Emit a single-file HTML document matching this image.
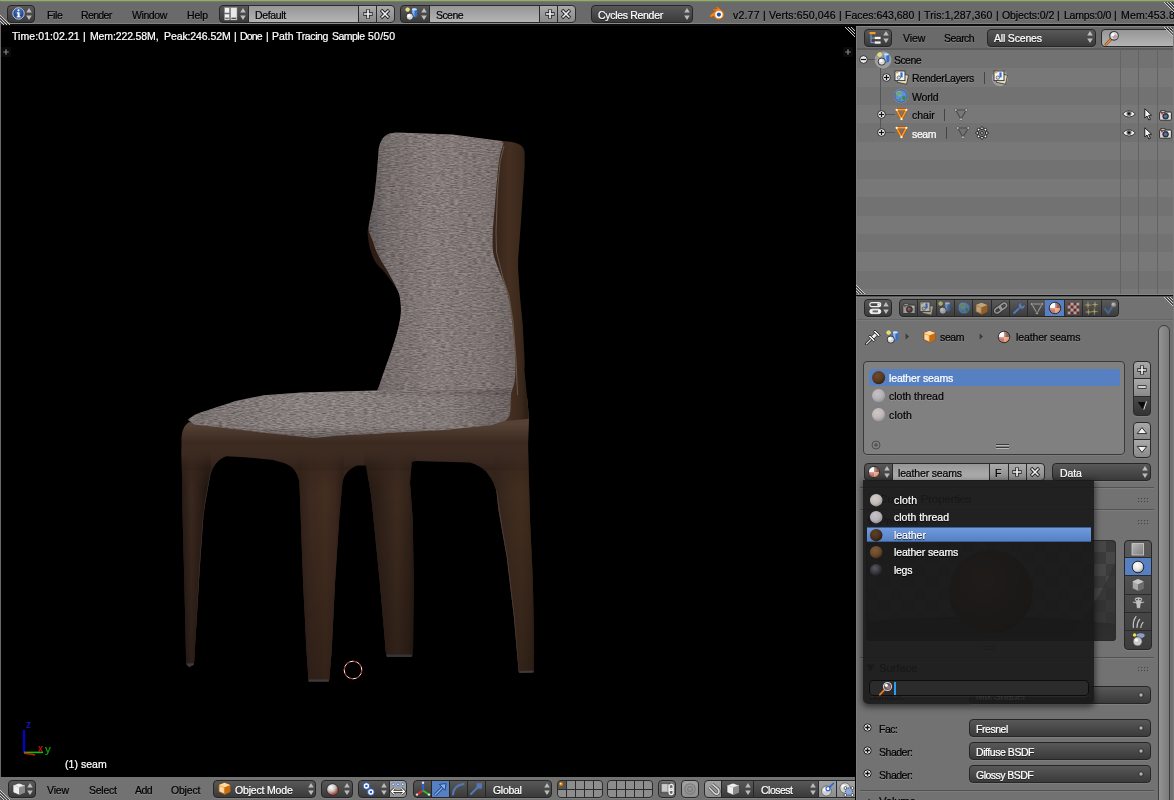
<!DOCTYPE html>
<html lang="en"><head><meta charset="utf-8"><title>Blender</title>
<style>
html,body{margin:0;padding:0;background:#000;overflow:hidden}
#root{position:relative;width:1174px;height:800px;overflow:hidden;background:#000;font-family:"Liberation Sans","DejaVu Sans",sans-serif;font-size:10.5px}
.b{position:absolute;box-sizing:border-box;display:block}
.t{-webkit-text-stroke:.22px;position:absolute;white-space:nowrap;line-height:12px;height:12px;will-change:transform}
.hdr{background:#727272}
.wm{border:1px solid #262626;background:linear-gradient(#585858,#3a3a3a);box-shadow:0 1px 0 rgba(255,255,255,.09)}
.wt{border:1px solid #2b2b2b;background:linear-gradient(#969696,#b4b4b4);box-shadow:0 1px 0 rgba(255,255,255,.09)}
.wb{border:1px solid #2b2b2b;background:linear-gradient(#a9a9a9,#8a8a8a);box-shadow:0 1px 0 rgba(255,255,255,.09)}
.sel{background:linear-gradient(#5680c2,#5680c2)}

</style></head>
<body>
<div id="root">
<div class="b" style="left:0px;top:0px;width:1174px;height:1.15px;background:#8cb450"></div>
<div class="b" style="left:0px;top:1.15px;width:1174px;height:1px;background:#77777c"></div>
<div class="b" style="left:0px;top:2px;width:1174px;height:21.2px;background:#6a6a6a"></div>
<div class="b" style="left:0px;top:23.2px;width:1174px;height:1px;background:#808080"></div>
<div class="b" style="left:0px;top:24.2px;width:1174px;height:1.9px;background:#0c0c0c"></div>
<div class="b" style="left:0px;top:1px;width:1px;height:799px;background:#6a6a6a"></div>
<svg class="b" style="left:0px;top:13px;" width="12" height="12" viewBox="0 0 12 12"><path d="M0 2 L10 12 M0 5 L7 12 M0 8 L4 12" stroke="#cfcfcf" stroke-width="1" fill="none"/><path d="M0 3.4 L8.6 12 M0 6.4 L5.6 12 M0 9.4 L2.6 12" stroke="#333" stroke-width="1" fill="none"/></svg>
<div class="b wm" style="left:7px;top:4.5px;width:28px;height:18.4px;border-radius:4px"></div>
<svg class="b" style="left:12px;top:7px;" width="13" height="13" viewBox="0 0 13 13"><circle cx="6.5" cy="6.5" r="5.7" fill="#234c98" stroke="#d4dcec" stroke-width=".9"/><circle cx="6.5" cy="4.6" r="3.8" fill="#5b86c9" opacity=".4"/><rect x="5.6" y="5.4" width="2" height="4.6" fill="#fff"/><rect x="4.8" y="5.4" width="2" height="1" fill="#fff"/><rect x="4.6" y="9.4" width="4" height="1" fill="#fff"/><circle cx="6.5" cy="3.3" r="1.1" fill="#fff"/></svg>
<svg class="b" style="left:24.2px;top:6.6px" width="10" height="14" viewBox="-5 -7 10 14"><path d="M0 -6 L2.8 -1.5 L-2.8 -1.5Z M0 6 L2.8 1.5 L-2.8 1.5Z" fill="#bcbcbc"/></svg>
<span class="t" style="left:46.5px;top:8.86px;color:#000;font-size:10.5px;letter-spacing:-0.369px;text-shadow:0 1px 0 rgba(255,255,255,.17);">File</span>
<span class="t" style="left:81.4px;top:8.86px;color:#000;font-size:10.5px;letter-spacing:-0.631px;text-shadow:0 1px 0 rgba(255,255,255,.17);">Render</span>
<span class="t" style="left:131.6px;top:8.86px;color:#000;font-size:10.5px;letter-spacing:-0.409px;text-shadow:0 1px 0 rgba(255,255,255,.17);">Window</span>
<span class="t" style="left:186.5px;top:8.86px;color:#000;font-size:10.5px;letter-spacing:-0.198px;text-shadow:0 1px 0 rgba(255,255,255,.17);">Help</span>
<div class="b wm" style="left:219px;top:4.5px;width:30px;height:18.4px;border-radius:4px 0 0 4px"></div>
<svg class="b" style="left:224px;top:7px;" width="14" height="14" viewBox="0 0 14 14"><rect x=".5" y=".5" width="5" height="5.5" fill="#f4f4f4" stroke="#888" stroke-width=".6"/><rect x=".5" y="7" width="5" height="6" fill="#f4f4f4" stroke="#888" stroke-width=".6"/><rect x="6.6" y=".5" width="6.4" height="12.5" fill="#e8e8e8" stroke="#888" stroke-width=".6"/><rect x="7.4" y="10.6" width="4.8" height="1.4" fill="#555"/><rect x="1.2" y="10.6" width="3.6" height="1.2" fill="#555"/></svg>
<svg class="b" style="left:237.7px;top:6.6px" width="10" height="14" viewBox="-5 -7 10 14"><path d="M0 -6 L2.8 -1.5 L-2.8 -1.5Z M0 6 L2.8 1.5 L-2.8 1.5Z" fill="#bcbcbc"/></svg>
<div class="b wt" style="left:248px;top:4.5px;width:111px;height:18.4px;"></div>
<span class="t" style="left:255.3px;top:8.86px;color:#000;font-size:10.5px;letter-spacing:-0.347px;text-shadow:0 1px 0 rgba(255,255,255,.17);">Default</span>
<div class="b wb" style="left:358px;top:4.5px;width:19px;height:18.4px;"></div>
<div class="b wb" style="left:376px;top:4.5px;width:19px;height:18.4px;border-radius:0 4px 4px 0"></div>
<svg class="b" style="left:362.4px;top:7.800000000000001px;" width="12" height="12" viewBox="0 0 12 12"><path d="M6 1.2V10.8M1.2 6H10.8" stroke="#1e1e1e" stroke-width="3.4" fill="none"/><path d="M6 1.8V10.2M1.8 6H10.2" stroke="#f2f2f2" stroke-width="1.7" fill="none"/></svg>
<svg class="b" style="left:379.2px;top:7.800000000000001px;" width="12" height="12" viewBox="0 0 12 12"><path d="M2 2L10 10M10 2L2 10" stroke="#1e1e1e" stroke-width="3.2" fill="none"/><path d="M2.5 2.5L9.5 9.5M9.5 2.5L2.5 9.5" stroke="#f2f2f2" stroke-width="1.6" fill="none"/></svg>
<div class="b wm" style="left:400px;top:4.5px;width:30px;height:18.4px;border-radius:4px 0 0 4px"></div>
<svg class="b" style="left:405px;top:6.5px;" width="14.0" height="14.0" viewBox="0 0 14 14"><circle cx="2.6" cy="2.6" r="1.9" fill="#e6e04a" stroke="#fffbd0" stroke-width=".5"/><rect x="6.6" y="1.2" width="5.6" height="9.4" rx="2.4" fill="#2f6fd2"/><rect x="7.2" y="1.6" width="2.2" height="8.4" rx="1.1" fill="#8fb6ee"/><ellipse cx="9.4" cy="2.4" rx="2.5" ry="1.1" fill="#cfe0f8"/><circle cx="4.8" cy="9.6" r="3.6" fill="#d8d8d8" stroke="#2a2a2a" stroke-width=".9"/><circle cx="3.9" cy="8.6" r="1.6" fill="#fff"/></svg>
<svg class="b" style="left:418.5px;top:6.6px" width="10" height="14" viewBox="-5 -7 10 14"><path d="M0 -6 L2.8 -1.5 L-2.8 -1.5Z M0 6 L2.8 1.5 L-2.8 1.5Z" fill="#bcbcbc"/></svg>
<div class="b wt" style="left:429px;top:4.5px;width:111px;height:18.4px;"></div>
<span class="t" style="left:435.7px;top:8.86px;color:#000;font-size:10.5px;letter-spacing:-0.570px;text-shadow:0 1px 0 rgba(255,255,255,.17);">Scene</span>
<div class="b wb" style="left:539px;top:4.5px;width:19px;height:18.4px;"></div>
<div class="b wb" style="left:557px;top:4.5px;width:19px;height:18.4px;border-radius:0 4px 4px 0"></div>
<svg class="b" style="left:543.5px;top:7.800000000000001px;" width="12" height="12" viewBox="0 0 12 12"><path d="M6 1.2V10.8M1.2 6H10.8" stroke="#1e1e1e" stroke-width="3.4" fill="none"/><path d="M6 1.8V10.2M1.8 6H10.2" stroke="#f2f2f2" stroke-width="1.7" fill="none"/></svg>
<svg class="b" style="left:560.2px;top:7.800000000000001px;" width="12" height="12" viewBox="0 0 12 12"><path d="M2 2L10 10M10 2L2 10" stroke="#1e1e1e" stroke-width="3.2" fill="none"/><path d="M2.5 2.5L9.5 9.5M9.5 2.5L2.5 9.5" stroke="#f2f2f2" stroke-width="1.6" fill="none"/></svg>
<div class="b wm" style="left:591px;top:4.5px;width:102px;height:18.4px;border-radius:4px"></div>
<span class="t" style="left:598.2px;top:8.86px;color:#fff;font-size:10.5px;letter-spacing:-0.306px;text-shadow:0 1px 0 rgba(0,0,0,.5);">Cycles Render</span>
<svg class="b" style="left:681.5px;top:6.6px" width="10" height="14" viewBox="-5 -7 10 14"><path d="M0 -6 L2.8 -1.5 L-2.8 -1.5Z M0 6 L2.8 1.5 L-2.8 1.5Z" fill="#bcbcbc"/></svg>
<svg class="b" style="left:708px;top:5.5px;" width="17" height="15" viewBox="0 0 17 15"><path d="M2 9.2 L8.2 4.4 L5.6 4.4 Q4.6 3.4 5.8 2.9 L9.6 2.9 L8.2 1.6 Q8.4 .4 9.6 .9 L15 5.6 Q17 8.6 15 11.6 Q12 14.4 8.4 13 Q6.2 12 5.8 9.8 L3.4 11.2 Q1.4 10.8 2 9.2Z" fill="#f5871f" stroke="#b55a08" stroke-width=".5"/><circle cx="10.9" cy="8.6" r="3.7" fill="#fff"/><circle cx="10.9" cy="8.6" r="2.1" fill="#1e4fa8"/></svg>
<span class="t" style="left:733.0px;top:8.86px;color:#000;font-size:10.5px;letter-spacing:0.199px;text-shadow:0 1px 0 rgba(255,255,255,.17);">v2.77</span>
<span class="t" style="left:762.9px;top:8.86px;color:#000;font-size:10.5px;text-shadow:0 1px 0 rgba(255,255,255,.17);">|</span>
<span class="t" style="left:769.1px;top:8.86px;color:#000;font-size:10.5px;letter-spacing:0.155px;text-shadow:0 1px 0 rgba(255,255,255,.17);">Verts:650,046</span>
<span class="t" style="left:839.2px;top:8.86px;color:#000;font-size:10.5px;text-shadow:0 1px 0 rgba(255,255,255,.17);">|</span>
<span class="t" style="left:845.4px;top:8.86px;color:#000;font-size:10.5px;letter-spacing:-0.017px;text-shadow:0 1px 0 rgba(255,255,255,.17);">Faces:643,680</span>
<span class="t" style="left:918.1px;top:8.86px;color:#000;font-size:10.5px;text-shadow:0 1px 0 rgba(255,255,255,.17);">|</span>
<span class="t" style="left:924.3px;top:8.86px;color:#000;font-size:10.5px;letter-spacing:0.126px;text-shadow:0 1px 0 rgba(255,255,255,.17);">Tris:1,287,360</span>
<span class="t" style="left:995.9px;top:8.86px;color:#000;font-size:10.5px;text-shadow:0 1px 0 rgba(255,255,255,.17);">|</span>
<span class="t" style="left:1001.7px;top:8.86px;color:#000;font-size:10.5px;letter-spacing:-0.084px;text-shadow:0 1px 0 rgba(255,255,255,.17);">Objects:0/2</span>
<span class="t" style="left:1057.4px;top:8.86px;color:#000;font-size:10.5px;text-shadow:0 1px 0 rgba(255,255,255,.17);">|</span>
<span class="t" style="left:1063.6px;top:8.86px;color:#000;font-size:10.5px;letter-spacing:-0.220px;text-shadow:0 1px 0 rgba(255,255,255,.17);">Lamps:0/0</span>
<span class="t" style="left:1113.9px;top:8.86px;color:#000;font-size:10.5px;text-shadow:0 1px 0 rgba(255,255,255,.17);">|</span>
<span class="t" style="left:1120.5px;top:8.86px;color:#000;font-size:10.5px;letter-spacing:0.155px;text-shadow:0 1px 0 rgba(255,255,255,.17);">Mem:453.8</span>
<svg class="b" style="left:1162px;top:2px;" width="12" height="12" viewBox="0 0 12 12"><path d="M2 0 L12 10 M5 0 L12 7 M8 0 L12 4" stroke="#cfcfcf" stroke-width="1" fill="none"/><path d="M3.4 0 L12 8.6 M6.4 0 L12 5.6 M9.4 0 L12 2.6" stroke="#2a2a2a" stroke-width="1" fill="none"/></svg>
<svg class="b" style="left:0;top:26px" width="855" height="751" viewBox="0 26 855 751"><defs><linearGradient id="lx" gradientUnits="userSpaceOnUse" x1="181" y1="0" x2="534" y2="0"><stop offset="0.0" stop-color="#271b15"/><stop offset="0.0255" stop-color="#3e2b20"/><stop offset="0.0453" stop-color="#33231a"/><stop offset="0.068" stop-color="#221712"/><stop offset="0.1388" stop-color="#33231b"/><stop offset="0.3088" stop-color="#3e2b20"/><stop offset="0.3399" stop-color="#3c291e"/><stop offset="0.3881" stop-color="#4d3424"/><stop offset="0.4278" stop-color="#412a1d"/><stop offset="0.4561" stop-color="#332118"/><stop offset="0.5411" stop-color="#291c15"/><stop offset="0.5977" stop-color="#3b291c"/><stop offset="0.6346" stop-color="#3f2b1e"/><stop offset="0.6601" stop-color="#2e2017"/><stop offset="0.7337" stop-color="#3e2b20"/><stop offset="0.847" stop-color="#3c291e"/><stop offset="0.9037" stop-color="#35241b"/><stop offset="0.9377" stop-color="#3f2b20"/><stop offset="0.9717" stop-color="#493123"/><stop offset="1.0" stop-color="#3e2a1d"/></linearGradient><linearGradient id="bk" gradientUnits="userSpaceOnUse" x1="368" y1="0" x2="515" y2="0"><stop offset="0" stop-color="#6a6263"/><stop offset="0.12" stop-color="#867d7c"/><stop offset="0.45" stop-color="#988e8c"/><stop offset="0.8" stop-color="#908684"/><stop offset="1" stop-color="#7e7573"/></linearGradient><linearGradient id="st" gradientUnits="userSpaceOnUse" x1="188" y1="0" x2="512" y2="0"><stop offset="0" stop-color="#8a8281"/><stop offset="0.35" stop-color="#9c9391"/><stop offset="0.8" stop-color="#968d8b"/><stop offset="1" stop-color="#7a7170"/></linearGradient><linearGradient id="stv" gradientUnits="userSpaceOnUse" x1="0" y1="391" x2="0" y2="438"><stop offset="0" stop-color="rgba(0,0,0,0)"/><stop offset="0.75" stop-color="rgba(0,0,0,0)"/><stop offset="1" stop-color="rgba(0,0,0,.28)"/></linearGradient><linearGradient id="frv" gradientUnits="userSpaceOnUse" x1="0" y1="424" x2="0" y2="470"><stop offset="0" stop-color="rgba(255,220,190,.16)"/><stop offset="0.4" stop-color="rgba(255,220,190,.03)"/><stop offset="1" stop-color="rgba(0,0,0,.12)"/></linearGradient><linearGradient id="sd" gradientUnits="userSpaceOnUse" x1="496" y1="0" x2="526" y2="0"><stop offset="0" stop-color="#37251b"/><stop offset="0.45" stop-color="#442f21"/><stop offset="0.8" stop-color="#3c291c"/><stop offset="1" stop-color="#2e2017"/></linearGradient><linearGradient id="jn" gradientUnits="userSpaceOnUse" x1="0" y1="388" x2="0" y2="398"><stop offset="0" stop-color="rgba(0,0,0,.0)"/><stop offset="0.5" stop-color="rgba(0,0,0,.10)"/><stop offset="1" stop-color="rgba(0,0,0,0)"/></linearGradient><filter id="nz" x="0" y="0" width="100%" height="100%"><feTurbulence type="fractalNoise" baseFrequency="0.22 0.95" numOctaves="2" seed="7" result="n"/><feColorMatrix in="n" type="matrix" values="0 0 0 0 0  0 0 0 0 0  0 0 0 0 0  1.1 1.1 0 0 -0.78"/><feComposite in2="SourceGraphic" operator="in"/></filter><linearGradient id="lgv" gradientUnits="userSpaceOnUse" x1="0" y1="470" x2="0" y2="685"><stop offset="0" stop-color="rgba(0,0,0,0)"/><stop offset="1" stop-color="rgba(0,0,0,.28)"/></linearGradient><linearGradient id="mvg" gradientUnits="userSpaceOnUse" x1="0" y1="400" x2="0" y2="700"><stop offset="0" stop-color="#000"/><stop offset="0.17" stop-color="#000"/><stop offset="0.3" stop-color="#fff"/><stop offset="1" stop-color="#fff"/></linearGradient><linearGradient id="l1" gradientUnits="userSpaceOnUse" x1="181" y1="0" x2="207" y2="0"><stop offset="0" stop-color="#251a14"/><stop offset="0.4" stop-color="#3b2920"/><stop offset="0.75" stop-color="#2d1f17"/><stop offset="1" stop-color="#201511"/></linearGradient><linearGradient id="l2" gradientUnits="userSpaceOnUse" x1="299" y1="0" x2="342" y2="0"><stop offset="0" stop-color="#302117"/><stop offset="0.25" stop-color="#3e2a20"/><stop offset="0.62" stop-color="#462f21"/><stop offset="0.85" stop-color="#3e2920"/><stop offset="1" stop-color="#2d1e16"/></linearGradient><linearGradient id="l3" gradientUnits="userSpaceOnUse" x1="366" y1="0" x2="414" y2="0"><stop offset="0" stop-color="#231913"/><stop offset="0.35" stop-color="#33231a"/><stop offset="0.65" stop-color="#3f2c20"/><stop offset="0.9" stop-color="#332319"/><stop offset="1" stop-color="#271b15"/></linearGradient><linearGradient id="l4" gradientUnits="userSpaceOnUse" x1="496" y1="0" x2="535" y2="0"><stop offset="0" stop-color="#33241c"/><stop offset="0.3" stop-color="#3e2b1f"/><stop offset="0.65" stop-color="#442f21"/><stop offset="0.9" stop-color="#3c291c"/><stop offset="1" stop-color="#332218"/></linearGradient></defs><path d="M181.3 454.4L181.5 440C181.5 431 184 425.5 189 422L312.5 436L512 405L527.2 398L529 418.8L528.1 445L529 482.5L530 520L532.9 581.3L534.1 652.6L533.7 671.6L533.4 672.4L519.2 673L518.7 671.6L513.9 616.9L506.8 557.5L498.5 510L496.3 490C492 478 486 467 470 462.6L415.6 461L411.9 461.9L410 482.5L412.8 520L413.7 581.3L413 652.6L411.8 657L386.8 656.3L386.1 654.9L379.7 581.3L372.6 510L370.6 491.9L365.9 465.6L357.5 465.6C350 468 344 474 342.5 482.5L341.6 491.9L339.5 515L335.1 581.3L331.6 652.6L329.2 679.9L328.7 681.4L308.5 681.4L308.5 679.9L306.6 652.6L303 581.3L300.5 512L299.4 482.5C298 472 292 465.5 284 463L273.1 460L245 457.2L226.3 456.3C218 459 213 466 210.3 475L205.6 501.3L203.5 515L199.7 569.4L196.1 628.8L194.2 662L193.8 664.6L189 667L186.2 664.6L184.3 581.3L182.4 510L182.2 482.5Z" fill="#35241b"/><clipPath id="cf"><path d="M181.3 454.4L181.5 440C181.5 431 184 425.5 189 422L312.5 436L512 405L527.2 398L529 418.8L528.1 445L529 482.5L530 520L532.9 581.3L534.1 652.6L533.7 671.6L533.4 672.4L519.2 673L518.7 671.6L513.9 616.9L506.8 557.5L498.5 510L496.3 490C492 478 486 467 470 462.6L415.6 461L411.9 461.9L410 482.5L412.8 520L413.7 581.3L413 652.6L411.8 657L386.8 656.3L386.1 654.9L379.7 581.3L372.6 510L370.6 491.9L365.9 465.6L357.5 465.6C350 468 344 474 342.5 482.5L341.6 491.9L339.5 515L335.1 581.3L331.6 652.6L329.2 679.9L328.7 681.4L308.5 681.4L308.5 679.9L306.6 652.6L303 581.3L300.5 512L299.4 482.5C298 472 292 465.5 284 463L273.1 460L245 457.2L226.3 456.3C218 459 213 466 210.3 475L205.6 501.3L203.5 515L199.7 569.4L196.1 628.8L194.2 662L193.8 664.6L189 667L186.2 664.6L184.3 581.3L182.4 510L182.2 482.5Z"/></clipPath><mask id="mv" maskUnits="userSpaceOnUse" x="170" y="400" width="380" height="300"><rect x="170" y="400" width="380" height="300" fill="url(#mvg)"/></mask><g clip-path="url(#cf)"><rect x="181" y="398" width="354" height="72" fill="url(#frv)"/><g mask="url(#mv)"><rect x="181" y="430" width="30" height="240" fill="url(#l1)"/><rect x="298" y="430" width="46" height="255" fill="url(#l2)"/><rect x="364" y="430" width="52" height="230" fill="url(#l3)"/><rect x="494" y="430" width="42" height="245" fill="url(#l4)"/></g><rect x="181" y="470" width="354" height="215" fill="url(#lgv)"/><path d="M477 465L489 475L497 491L500 512L508 560L515 620L519 672L516 672L510 615L503 557L495 510L491 492L484 478L474 468Z" fill="#564941" opacity=".7"/><path d="M226 456.5C217 459.5 212 467 209.5 476L204.8 502L202.5 520L199 570L196 628L197.5 628L200.5 570L204.5 520L207 502L212 478C215 469 220 462 230 459.5Z" fill="#594c43" opacity=".5"/></g><path d="M420 225L378.4 153C378.1 156.8 377.4 167.8 376.6 175.6C375.8 183.4 374.9 192.8 373.8 200.0C372.7 207.2 371.0 214.0 370.0 218.8C369.0 223.6 368.4 226.5 368.0 229.0C367.6 231.5 367.5 231.3 367.7 234.0C367.9 236.7 368.5 241.8 369.1 245.0C369.7 248.2 370.6 250.5 371.5 253.0C372.4 255.5 373.1 257.9 374.2 260.0C375.3 262.1 376.5 263.7 378.0 265.5C379.5 267.3 381.3 268.5 383.1 270.6C384.9 272.7 387.1 275.5 389.0 278.0C390.9 280.5 392.8 283.2 394.4 285.6C396.0 288.0 397.4 290.2 398.4 292.5C399.4 294.8 400.0 296.3 400.4 299.5C400.8 302.7 401.3 307.0 400.9 311.9C400.5 316.8 399.5 322.9 398.1 328.8C396.7 334.7 394.5 341.2 392.5 347.5C390.5 353.8 388.1 360.1 385.9 366.3C383.7 372.6 381.0 380.7 379.4 385.0C377.8 389.3 376.8 390.8 376.3 392.0L420 392Z" fill="#2d1d15"/><path d="M494 140L512 142C520 143.5 524.7 147 524.7 153.1L524.7 166.3L522.8 194.4L520.9 222.5L518.1 260L518.1 268.8L520 296.9L522.8 325L524.7 362.5L524.4 370L527.2 398.1L529 418.8L505 421L488 380L485 250L488 180Z" fill="url(#sd)"/><path d="M378.4 153C378.6 145 381 136.5 390 133.2L396.3 132.5L452.5 134.4L501.3 140.9C503.5 141.5 503.8 143 503.1 144.5C502.5 146.9 500.5 152.1 499.4 158.8C498.3 165.6 497.4 176.9 496.6 185.0C495.8 193.1 495.3 199.7 494.7 207.5C494.1 215.3 493.1 224.8 492.8 231.9C492.5 239.0 492.4 245.1 492.9 250.0C493.4 254.9 494.2 256.9 495.6 261.3C497.0 265.7 499.4 271.3 501.3 276.3C503.2 281.3 505.3 285.7 506.9 291.3C508.4 296.9 509.5 302.8 510.6 310.0C511.7 317.2 512.6 325.6 513.4 334.4C514.2 343.1 515.1 354.7 515.3 362.5C515.5 370.3 515.3 376.4 514.6 381.3C513.9 386.2 511.9 390.2 511.3 392.0L376.3 392C376.8 390.8 377.8 389.3 379.4 385.0C381.0 380.7 383.7 372.6 385.9 366.3C388.1 360.1 390.5 353.8 392.5 347.5C394.5 341.2 396.7 334.7 398.1 328.8C399.5 322.9 400.6 317.4 400.9 311.9C401.1 306.4 400.4 300.1 399.6 296.0C398.8 291.9 397.6 290.3 396.3 287.5C395.0 284.7 393.7 282.2 392.0 279.0C390.3 275.8 388.0 271.9 386.0 268.5C384.0 265.1 381.7 261.6 380.0 258.5C378.3 255.4 377.0 252.9 375.8 250.0C374.6 247.1 373.7 243.8 372.8 241.3C371.9 238.8 370.9 237.1 370.2 235.0C369.5 232.9 368.6 231.7 368.6 229.0C368.6 226.3 369.1 223.6 370.0 218.8C370.9 214.0 372.7 207.2 373.8 200.0C374.9 192.8 375.8 183.4 376.6 175.6C377.4 167.8 378.1 156.8 378.4 153.0Z" fill="url(#bk)"/><path d="M187.8 419.7C195 414 201 412 207.5 410.3L235.6 400.9L263.8 395.3L301.3 392.5L338.8 391.6L376.3 390.6L511.3 388.8L510.3 411.3C509.5 417 507.5 419.5 505.6 420.6L490.6 425.3L443.8 430L390 432.8L376.3 433.8L338.8 435.6L312.5 437.9L310.6 437.5L263.8 432.8L226.3 428.1L194.4 424.4Z" fill="url(#st)"/><path d="M187.8 419.7C195 414 201 412 207.5 410.3L235.6 400.9L263.8 395.3L301.3 392.5L338.8 391.6L376.3 390.6L511.3 388.8L510.3 411.3C509.5 417 507.5 419.5 505.6 420.6L490.6 425.3L443.8 430L390 432.8L376.3 433.8L338.8 435.6L312.5 437.9L310.6 437.5L263.8 432.8L226.3 428.1L194.4 424.4Z" fill="url(#stv)"/><path d="M376.3 390L511.3 388L511 396L374 398Z" fill="url(#jn)"/><g filter="url(#nz)" opacity=".42"><path d="M378.4 153C378.6 145 381 136.5 390 133.2L396.3 132.5L452.5 134.4L501.3 140.9C503.5 141.5 503.8 143 503.1 144.5C502.5 146.9 500.5 152.1 499.4 158.8C498.3 165.6 497.4 176.9 496.6 185.0C495.8 193.1 495.3 199.7 494.7 207.5C494.1 215.3 493.1 224.8 492.8 231.9C492.5 239.0 492.4 245.1 492.9 250.0C493.4 254.9 494.2 256.9 495.6 261.3C497.0 265.7 499.4 271.3 501.3 276.3C503.2 281.3 505.3 285.7 506.9 291.3C508.4 296.9 509.5 302.8 510.6 310.0C511.7 317.2 512.6 325.6 513.4 334.4C514.2 343.1 515.1 354.7 515.3 362.5C515.5 370.3 515.3 376.4 514.6 381.3C513.9 386.2 511.9 390.2 511.3 392.0L376.3 392C376.8 390.8 377.8 389.3 379.4 385.0C381.0 380.7 383.7 372.6 385.9 366.3C388.1 360.1 390.5 353.8 392.5 347.5C394.5 341.2 396.7 334.7 398.1 328.8C399.5 322.9 400.6 317.4 400.9 311.9C401.1 306.4 400.4 300.1 399.6 296.0C398.8 291.9 397.6 290.3 396.3 287.5C395.0 284.7 393.7 282.2 392.0 279.0C390.3 275.8 388.0 271.9 386.0 268.5C384.0 265.1 381.7 261.6 380.0 258.5C378.3 255.4 377.0 252.9 375.8 250.0C374.6 247.1 373.7 243.8 372.8 241.3C371.9 238.8 370.9 237.1 370.2 235.0C369.5 232.9 368.6 231.7 368.6 229.0C368.6 226.3 369.1 223.6 370.0 218.8C370.9 214.0 372.7 207.2 373.8 200.0C374.9 192.8 375.8 183.4 376.6 175.6C377.4 167.8 378.1 156.8 378.4 153.0Z" fill="#2a2626"/><path d="M187.8 419.7C195 414 201 412 207.5 410.3L235.6 400.9L263.8 395.3L301.3 392.5L338.8 391.6L376.3 390.6L511.3 388.8L510.3 411.3C509.5 417 507.5 419.5 505.6 420.6L490.6 425.3L443.8 430L390 432.8L376.3 433.8L338.8 435.6L312.5 437.9L310.6 437.5L263.8 432.8L226.3 428.1L194.4 424.4Z" fill="#2a2626"/></g><path d="M504 146L500 162L497.5 190L496 232L496.5 252L503 278L509 296L513 322L516 360L517.5 395" fill="none" stroke="#8a7868" stroke-width=".7" opacity=".8"/><path d="M308.7 679.5H328.9L328.6 681.6H308.7Z" fill="#3a3c40"/><path d="M386.6 654.6H412L411.6 657H386.9Z" fill="#33353a"/><path d="M519 671L533.6 670.4L533.4 672.5L519.3 673Z" fill="#3a3c40"/><path d="M186.4 663.5L193.9 663.2L193.6 665L189 667Z" fill="#3a3c40"/></svg>
<span class="t" style="left:11.7px;top:29.96px;color:#fff;font-size:10.5px;letter-spacing:0.078px;text-shadow:0 1px 1px #000, 0 0 2px #000;">Time:01:02.21</span>
<span class="t" style="left:83.1px;top:29.96px;color:#fff;font-size:10.5px;text-shadow:0 1px 1px #000, 0 0 2px #000;">|</span>
<span class="t" style="left:89.7px;top:29.96px;color:#fff;font-size:10.5px;letter-spacing:-0.134px;text-shadow:0 1px 1px #000, 0 0 2px #000;">Mem:222.58M,</span>
<span class="t" style="left:164.1px;top:29.96px;color:#fff;font-size:10.5px;letter-spacing:-0.095px;text-shadow:0 1px 1px #000, 0 0 2px #000;">Peak:246.52M</span>
<span class="t" style="left:234.0px;top:29.96px;color:#fff;font-size:10.5px;text-shadow:0 1px 1px #000, 0 0 2px #000;">|</span>
<span class="t" style="left:240.2px;top:29.96px;color:#fff;font-size:10.5px;letter-spacing:-0.836px;text-shadow:0 1px 1px #000, 0 0 2px #000;">Done</span>
<span class="t" style="left:266.2px;top:29.96px;color:#fff;font-size:10.5px;text-shadow:0 1px 1px #000, 0 0 2px #000;">|</span>
<span class="t" style="left:272.0px;top:29.96px;color:#fff;font-size:10.5px;letter-spacing:-0.036px;text-shadow:0 1px 1px #000, 0 0 2px #000;">Path</span>
<span class="t" style="left:296.0px;top:29.96px;color:#fff;font-size:10.5px;letter-spacing:-0.371px;text-shadow:0 1px 1px #000, 0 0 2px #000;">Tracing</span>
<span class="t" style="left:331.8px;top:29.96px;color:#fff;font-size:10.5px;letter-spacing:-0.522px;text-shadow:0 1px 1px #000, 0 0 2px #000;">Sample</span>
<span class="t" style="left:368.2px;top:29.96px;color:#fff;font-size:10.5px;letter-spacing:0.226px;text-shadow:0 1px 1px #000, 0 0 2px #000;">50/50</span>
<span class="t" style="left:64.5px;top:758.16px;color:#fff;font-size:10.5px;letter-spacing:0.035px;text-shadow:0 1px 1px #000, 0 0 2px #000;">(1) seam</span>
<svg class="b" style="left:0.5px;top:47.3px;" width="10" height="10" viewBox="0 0 10 10"><rect x="-1" y="-1" width="12" height="12" rx="2" fill="#0a0a0a"/><path d="M5 2.2V7.8M2.2 5H7.8" stroke="#868686" stroke-width="1.2"/></svg>
<svg class="b" style="left:842.5px;top:47.3px;" width="10" height="10" viewBox="0 0 10 10"><rect x="-1" y="-1" width="12" height="12" rx="2" fill="#0a0a0a"/><path d="M5 2.2V7.8M2.2 5H7.8" stroke="#868686" stroke-width="1.2"/></svg>
<svg class="b" style="left:843px;top:26.5px;" width="12" height="12" viewBox="0 0 12 12"><path d="M2 0 L12 10 M5 0 L12 7 M8 0 L12 4" stroke="#cfcfcf" stroke-width="1" fill="none"/><path d="M3.4 0 L12 8.6 M6.4 0 L12 5.6 M9.4 0 L12 2.6" stroke="#2a2a2a" stroke-width="1" fill="none"/></svg>
<svg class="b" style="left:18px;top:718px;" width="40" height="42" viewBox="0 0 40 42"><path d="M6 12V35" stroke="#0000e6" stroke-width="2"/><path d="M6 34.4H25" stroke="#00c800" stroke-width="1.6"/><path d="M6 35.2L14 36.2L17 37" stroke="#e61010" stroke-width="1.5" fill="none"/></svg>
<span class="t" style="left:26.0px;top:718.94px;color:#1616d8;font-size:10px;">z</span>
<span class="t" style="left:38.2px;top:742.54px;color:#d01010;font-size:10px;">x</span>
<span class="t" style="left:45.0px;top:742.62px;color:#00b400;font-size:11.5px;">y</span>
<svg class="b" style="left:341.9px;top:659.4px;" width="22" height="22" viewBox="0 0 22 22"><circle cx="11" cy="11" r="8.8" fill="none" stroke="#f0f0f0" stroke-width="1"/><circle cx="11" cy="11" r="8.8" fill="none" stroke="#c80000" stroke-width="1" stroke-dasharray="3.456 3.456"/></svg>
<div class="b hdr" style="left:0px;top:777px;width:855px;height:23px;"></div>
<svg class="b" style="left:0px;top:788px;" width="12" height="12" viewBox="0 0 12 12"><path d="M0 2 L10 12 M0 5 L7 12 M0 8 L4 12" stroke="#cfcfcf" stroke-width="1" fill="none"/><path d="M0 3.4 L8.6 12 M0 6.4 L5.6 12 M0 9.4 L2.6 12" stroke="#333" stroke-width="1" fill="none"/></svg>
<div class="b wm" style="left:8px;top:780px;width:28px;height:18px;border-radius:4px"></div>
<svg class="b" style="left:12px;top:782px;" width="14" height="14" viewBox="0 0 14 14"><path d="M1 3.2 L7 1 L13 3.2 L13 10.4 L7 13 L1 10.4Z" fill="#efefef" stroke="#3a3a3a" stroke-width=".7"/><path d="M7 5.4 L13 3.2 L13 10.4 L7 13Z" fill="#8a8a8a"/><path d="M1 3.2L7 5.4L13 3.2" fill="none" stroke="#bdbdbd" stroke-width=".6"/></svg>
<svg class="b" style="left:25.3px;top:781.8px" width="10" height="14" viewBox="-5 -7 10 14"><path d="M0 -6 L2.8 -1.5 L-2.8 -1.5Z M0 6 L2.8 1.5 L-2.8 1.5Z" fill="#bcbcbc"/></svg>
<span class="t" style="left:47.0px;top:783.56px;color:#000;font-size:10.5px;letter-spacing:-0.188px;text-shadow:0 1px 0 rgba(255,255,255,.17);">View</span>
<span class="t" style="left:88.5px;top:783.56px;color:#000;font-size:10.5px;letter-spacing:-0.237px;text-shadow:0 1px 0 rgba(255,255,255,.17);">Select</span>
<span class="t" style="left:135.0px;top:783.56px;color:#000;font-size:10.5px;letter-spacing:-0.594px;text-shadow:0 1px 0 rgba(255,255,255,.17);">Add</span>
<span class="t" style="left:170.9px;top:783.56px;color:#000;font-size:10.5px;letter-spacing:-0.192px;text-shadow:0 1px 0 rgba(255,255,255,.17);">Object</span>
<div class="b wm" style="left:213px;top:780px;width:103px;height:18px;border-radius:4px"></div>
<svg class="b" style="left:217.5px;top:782.2px;" width="13.0" height="13.0" viewBox="0 0 13 13"><path d="M.8 3 L6.5 .8 L12.2 3 L12.2 9.8 L6.5 12.4 L.8 9.8Z" fill="#f0a13c" stroke="#7a4a10" stroke-width=".7"/><path d="M6.5 5.2 L12.2 3 L12.2 9.8 L6.5 12.4Z" fill="#c46c12"/><path d="M.8 3L6.5 5.2L12.2 3L6.5 .8Z" fill="#ffd9a0"/><path d="M1.6 4.2L5.8 5.8V11L1.6 9.2Z" fill="#fbe3c0" opacity=".85"/></svg>
<span class="t" style="left:235.0px;top:783.56px;color:#fff;font-size:10.5px;letter-spacing:-0.176px;text-shadow:0 1px 0 rgba(0,0,0,.5);">Object Mode</span>
<svg class="b" style="left:305.6px;top:781.8px" width="10" height="14" viewBox="-5 -7 10 14"><path d="M0 -6 L2.8 -1.5 L-2.8 -1.5Z M0 6 L2.8 1.5 L-2.8 1.5Z" fill="#bcbcbc"/></svg>
<div class="b wm" style="left:321px;top:780px;width:32px;height:18px;border-radius:4px"></div>
<svg class="b" style="left:326px;top:782.5px;" width="13" height="13" viewBox="0 0 13 13"><defs><radialGradient id="gs1" cx=".38" cy=".32" r=".75"><stop offset="0" stop-color="#fff"/><stop offset=".45" stop-color="#c9c9c9"/><stop offset=".8" stop-color="#b05040"/><stop offset="1" stop-color="#e09070"/></radialGradient></defs><circle cx="6.5" cy="6.5" r="5.8" fill="url(#gs1)" stroke="#222" stroke-width=".8"/></svg>
<svg class="b" style="left:342px;top:781.8px" width="10" height="14" viewBox="-5 -7 10 14"><path d="M0 -6 L2.8 -1.5 L-2.8 -1.5Z M0 6 L2.8 1.5 L-2.8 1.5Z" fill="#bcbcbc"/></svg>
<div class="b wm" style="left:358px;top:780px;width:32px;height:18px;border-radius:4px 0 0 4px"></div>
<svg class="b" style="left:361px;top:780.5px;" width="16" height="16" viewBox="0 0 16 16"><circle cx="5.4" cy="5" r="3.3" fill="#fff" stroke="#2458c0" stroke-width=".9"/><circle cx="9.9" cy="11" r="3.3" fill="#fff" stroke="#2458c0" stroke-width=".9"/><rect x="4.3" y="3.9" width="2.2" height="2.2" fill="#2a62d0"/><rect x="8.8" y="9.9" width="2.2" height="2.2" fill="#2a62d0"/></svg>
<svg class="b" style="left:379px;top:781.8px" width="10" height="14" viewBox="-5 -7 10 14"><path d="M0 -6 L2.8 -1.5 L-2.8 -1.5Z M0 6 L2.8 1.5 L-2.8 1.5Z" fill="#bcbcbc"/></svg>
<div class="b wb" style="left:389px;top:780px;width:18px;height:18px;border-radius:0 4px 4px 0;background:linear-gradient(#a6a6a6,#949494)"></div>
<svg class="b" style="left:390px;top:781px;" width="16" height="16" viewBox="0 0 16 16"><circle cx="3.2" cy="3.2" r="1.3" fill="#fff" stroke="#2a62d0" stroke-width=".8"/><circle cx="8" cy="3.2" r="1.3" fill="#fff" stroke="#2a62d0" stroke-width=".8"/><circle cx="12.8" cy="3.2" r="1.3" fill="#fff" stroke="#2a62d0" stroke-width=".8"/><path d="M1.5 10.4H14.5M4.6 7.4L1.5 10.4L4.6 13.4M11.4 7.4L14.5 10.4L11.4 13.4" stroke="#222" stroke-width="2.6" fill="none"/><path d="M1.5 10.4H14.5M4.6 7.4L1.5 10.4L4.6 13.4M11.4 7.4L14.5 10.4L11.4 13.4" stroke="#fff" stroke-width="1.3" fill="none"/></svg>
<div class="b wm" style="left:413px;top:780px;width:19px;height:18px;border-radius:4px 0 0 4px"></div>
<svg class="b" style="left:414.5px;top:781px;" width="16" height="16" viewBox="0 0 16 16"><path d="M8 9.4V1.6" stroke="#2a62e0" stroke-width="1.8"/><path d="M8 9.4L2 13.6" stroke="#e02a2a" stroke-width="1.8"/><path d="M8 9.4L14 13.6" stroke="#2ac02a" stroke-width="1.8"/><circle cx="8" cy="1.8" r="1.2" fill="#cfe0ff"/><circle cx="2" cy="13.6" r="1.2" fill="#ffd0d0"/><circle cx="14" cy="13.6" r="1.2" fill="#d0ffd0"/></svg>
<div class="b wm sel" style="left:431px;top:780px;width:19px;height:18px;"></div>
<svg class="b" style="left:432.5px;top:781.5px;" width="15" height="15" viewBox="0 0 15 15"><path d="M2 13L10 5" stroke="#1a3a78" stroke-width="3"/><path d="M2 13L10 5" stroke="#7fb0f5" stroke-width="1.5"/><path d="M6.4 2.4L13 1.6L12 8.4Z" fill="#7fb0f5" stroke="#1a3a78" stroke-width=".9"/></svg>
<div class="b wm" style="left:449px;top:780px;width:19px;height:18px;"></div>
<svg class="b" style="left:451px;top:782px;" width="15" height="14" viewBox="0 0 15 14"><path d="M2 12.5Q2.6 3.4 12.4 2.2" fill="none" stroke="#5578b4" stroke-width="2.2" stroke-linecap="round"/></svg>
<div class="b wm" style="left:467px;top:780px;width:19px;height:18px;"></div>
<svg class="b" style="left:469px;top:782px;" width="15" height="14" viewBox="0 0 15 14"><path d="M2 12L9 5" stroke="#5578b4" stroke-width="2" stroke-linecap="round"/><rect x="7.6" y="1.2" width="5.4" height="5.4" fill="#5578b4"/></svg>
<div class="b wm" style="left:485px;top:780px;width:67px;height:18px;border-radius:0 4px 4px 0"></div>
<span class="t" style="left:492.5px;top:783.56px;color:#fff;font-size:10.5px;letter-spacing:-0.312px;text-shadow:0 1px 0 rgba(0,0,0,.5);">Global</span>
<svg class="b" style="left:541.5px;top:781.8px" width="10" height="14" viewBox="-5 -7 10 14"><path d="M0 -6 L2.8 -1.5 L-2.8 -1.5Z M0 6 L2.8 1.5 L-2.8 1.5Z" fill="#bcbcbc"/></svg>
<div class="b" style="left:557px;top:780px;width:46px;height:18px;border-radius:4px;background:#2b2b2b;border:1px solid #2b2b2b;box-shadow:0 1px 0 rgba(255,255,255,.09)"></div>
<div class="b" style="left:558px;top:781.0px;width:8px;height:7.5px;background:#555;border-radius:3px 0 0 0;"></div>
<div class="b" style="left:567px;top:781.0px;width:8px;height:7.5px;background:#8d8d8d;"></div>
<div class="b" style="left:576px;top:781.0px;width:8px;height:7.5px;background:#8d8d8d;"></div>
<div class="b" style="left:585px;top:781.0px;width:8px;height:7.5px;background:#8d8d8d;"></div>
<div class="b" style="left:594px;top:781.0px;width:8px;height:7.5px;background:#8d8d8d;border-radius:0 3px 0 0;"></div>
<div class="b" style="left:558px;top:789.5px;width:8px;height:7.5px;background:#8d8d8d;border-radius:0 0 0 3px;"></div>
<div class="b" style="left:567px;top:789.5px;width:8px;height:7.5px;background:#8d8d8d;"></div>
<div class="b" style="left:576px;top:789.5px;width:8px;height:7.5px;background:#8d8d8d;"></div>
<div class="b" style="left:585px;top:789.5px;width:8px;height:7.5px;background:#8d8d8d;"></div>
<div class="b" style="left:594px;top:789.5px;width:8px;height:7.5px;background:#8d8d8d;border-radius:0 0 3px 0;"></div>
<svg class="b" style="left:557.9px;top:781px;" width="6" height="6" viewBox="0 0 6 6"><circle cx="3" cy="3" r="1.9" fill="#f59a23" stroke="#a85400" stroke-width=".5"/><circle cx="2.6" cy="2.5" r=".8" fill="#ffe0a0"/></svg>
<div class="b" style="left:607px;top:780px;width:46px;height:18px;border-radius:4px;background:#2b2b2b;border:1px solid #2b2b2b;box-shadow:0 1px 0 rgba(255,255,255,.09)"></div>
<div class="b" style="left:608px;top:781.0px;width:8px;height:7.5px;background:#8d8d8d;border-radius:3px 0 0 0;"></div>
<div class="b" style="left:617px;top:781.0px;width:8px;height:7.5px;background:#8d8d8d;"></div>
<div class="b" style="left:626px;top:781.0px;width:8px;height:7.5px;background:#8d8d8d;"></div>
<div class="b" style="left:635px;top:781.0px;width:8px;height:7.5px;background:#8d8d8d;"></div>
<div class="b" style="left:644px;top:781.0px;width:8px;height:7.5px;background:#8d8d8d;border-radius:0 3px 0 0;"></div>
<div class="b" style="left:608px;top:789.5px;width:8px;height:7.5px;background:#8d8d8d;border-radius:0 0 0 3px;"></div>
<div class="b" style="left:617px;top:789.5px;width:8px;height:7.5px;background:#8d8d8d;"></div>
<div class="b" style="left:626px;top:789.5px;width:8px;height:7.5px;background:#8d8d8d;"></div>
<div class="b" style="left:635px;top:789.5px;width:8px;height:7.5px;background:#8d8d8d;"></div>
<div class="b" style="left:644px;top:789.5px;width:8px;height:7.5px;background:#8d8d8d;border-radius:0 0 3px 0;"></div>
<div class="b wb" style="left:658px;top:780px;width:18px;height:18px;border-radius:4px;background:linear-gradient(#747474,#626262)"></div>
<svg class="b" style="left:660px;top:782px;" width="14" height="14" viewBox="0 0 14 14"><rect x="1" y="1.2" width="8.6" height="9.6" fill="#a8a8a8" stroke="#3a3a3a" stroke-width=".8"/><rect x="2" y="2.2" width="5" height="7" fill="#c9c9c9"/><path d="M9.2 4.4a2 2 0 0 1 4 0v2a2 2 0 0 1-4 0zM9.2 8.6a2 2 0 0 1 4 0v2a2 2 0 0 1-4 0z" fill="none" stroke="#f4f4f4" stroke-width="1.3"/></svg>
<div class="b wb" style="left:681px;top:780px;width:18px;height:18px;border-radius:4px;background:linear-gradient(#a2a2a2,#8e8e8e)"></div>
<svg class="b" style="left:683px;top:782px;" width="14" height="14" viewBox="0 0 14 14"><circle cx="7" cy="7" r="5.2" fill="none" stroke="#7c7c7c" stroke-width="1.2"/><circle cx="7" cy="7" r="2.4" fill="none" stroke="#7c7c7c" stroke-width="1.2"/></svg>
<div class="b wb" style="left:704px;top:780px;width:18px;height:18px;border-radius:4px 0 0 4px;background:linear-gradient(#a2a2a2,#8e8e8e)"></div>
<svg class="b" style="left:705.5px;top:781.5px;" width="15" height="15" viewBox="0 0 15 15"><path d="M3 5.4L8.6 11.4Q11.4 13.4 12.8 10.6Q13.6 8 11.4 6.4L6.4 2.2" fill="none" stroke="#5a5a5a" stroke-width="3.2"/><path d="M3 5.4L8.6 11.4Q11.4 13.4 12.8 10.6Q13.6 8 11.4 6.4L6.4 2.2" fill="none" stroke="#d8d8d8" stroke-width="1.5"/></svg>
<div class="b wm" style="left:721px;top:780px;width:33px;height:18px;"></div>
<svg class="b" style="left:726px;top:782px;" width="14" height="14" viewBox="0 0 14 14"><path d="M1 3.2 L7 1 L13 3.2 L13 10.4 L7 13 L1 10.4Z" fill="#efefef" stroke="#3a3a3a" stroke-width=".7"/><path d="M7 5.4 L13 3.2 L13 10.4 L7 13Z" fill="#8a8a8a"/><path d="M1 3.2L7 5.4L13 3.2" fill="none" stroke="#bdbdbd" stroke-width=".6"/></svg>
<svg class="b" style="left:742.6px;top:781.8px" width="10" height="14" viewBox="-5 -7 10 14"><path d="M0 -6 L2.8 -1.5 L-2.8 -1.5Z M0 6 L2.8 1.5 L-2.8 1.5Z" fill="#bcbcbc"/></svg>
<div class="b wm" style="left:753px;top:780px;width:66px;height:18px;"></div>
<span class="t" style="left:760.6px;top:783.56px;color:#fff;font-size:10.5px;letter-spacing:-0.519px;text-shadow:0 1px 0 rgba(0,0,0,.5);">Closest</span>
<svg class="b" style="left:808px;top:781.8px" width="10" height="14" viewBox="-5 -7 10 14"><path d="M0 -6 L2.8 -1.5 L-2.8 -1.5Z M0 6 L2.8 1.5 L-2.8 1.5Z" fill="#bcbcbc"/></svg>
<div class="b wb" style="left:818px;top:780px;width:19px;height:18px;background:linear-gradient(#a2a2a2,#8e8e8e)"></div>
<svg class="b" style="left:820px;top:781px;" width="16" height="16" viewBox="0 0 16 16"><circle cx="6.4" cy="10" r="5" fill="#d0d0d0" stroke="#555" stroke-width=".7"/><circle cx="5" cy="8.4" r="2" fill="#f4f4f4"/><path d="M8.4 7.4L14 1.8" stroke="#2a62d0" stroke-width="1.6"/><circle cx="8" cy="7.8" r="2" fill="#fff" stroke="#2a62d0" stroke-width="1.1"/></svg>
<div class="b wb" style="left:836px;top:780px;width:20px;height:18px;background:linear-gradient(#a2a2a2,#8e8e8e);border-right:none"></div>
<svg class="b" style="left:838px;top:781px;" width="18" height="17" viewBox="0 0 18 17"><circle cx="7" cy="7" r="5.2" fill="#d4d4d4" stroke="#555" stroke-width=".7"/><circle cx="5.6" cy="5.6" r="2.2" fill="#f6f6f6"/><rect x="7.4" y="7" width="7" height="7" fill="#8aa8e0" stroke="#111" stroke-width=".6" stroke-dasharray="1.2 1.2"/><circle cx="7.4" cy="7" r="1.4" fill="#fff" stroke="#111" stroke-width=".6"/><circle cx="14.4" cy="7" r="1.4" fill="#fff" stroke="#111" stroke-width=".6"/><circle cx="7.4" cy="14" r="1.4" fill="#fff" stroke="#111" stroke-width=".6"/><circle cx="14.4" cy="14" r="1.4" fill="#fff" stroke="#111" stroke-width=".6"/></svg>
<div class="b" style="left:855px;top:26px;width:1px;height:774px;background:#000"></div>
<div class="b" style="left:856px;top:26px;width:318px;height:1.2px;background:#868686"></div>
<div class="b" style="left:856px;top:27.2px;width:318px;height:21.4px;background:#6a6a6a"></div>
<div class="b" style="left:856px;top:49px;width:318px;height:246px;background:#727272"></div>
<div class="b" style="left:856px;top:68.3px;width:318px;height:18.4px;background:#787878"></div>
<div class="b" style="left:856px;top:105.1px;width:318px;height:18.4px;background:#787878"></div>
<div class="b" style="left:856px;top:141.9px;width:318px;height:18.4px;background:#787878"></div>
<div class="b" style="left:856px;top:178.7px;width:318px;height:18.4px;background:#787878"></div>
<div class="b" style="left:856px;top:215.5px;width:318px;height:18.4px;background:#787878"></div>
<div class="b" style="left:856px;top:252.3px;width:318px;height:18.4px;background:#787878"></div>
<div class="b" style="left:856px;top:289.1px;width:318px;height:4.9px;background:#787878"></div>
<div class="b" style="left:856px;top:48.4px;width:318px;height:1.2px;background:#5c5c5c"></div>
<div class="b" style="left:1120px;top:49px;width:1px;height:245px;background:#646464"></div>
<div class="b" style="left:1138px;top:49px;width:1px;height:245px;background:#646464"></div>
<div class="b" style="left:1157px;top:49px;width:1px;height:245px;background:#646464"></div>
<div class="b" style="left:856px;top:26px;width:1px;height:269px;background:#7e7e7e"></div>
<div class="b wm" style="left:864px;top:28.5px;width:28px;height:18px;border-radius:4px"></div>
<svg class="b" style="left:868.5px;top:30.5px;" width="14" height="14" viewBox="0 0 14 14"><rect x="0.5" y="1" width="6" height="2.2" fill="#f59a23"/><path d="M2 3.4V12M2 7H5M2 11.6H5" stroke="#7aa0e0" stroke-width="1" fill="none"/><rect x="5.6" y="5.8" width="6" height="2.3" fill="#f4f4f4"/><rect x="5.6" y="10.4" width="6" height="2.3" fill="#f4f4f4"/></svg>
<svg class="b" style="left:881.2px;top:30.4px" width="10" height="14" viewBox="-5 -7 10 14"><path d="M0 -6 L2.8 -1.5 L-2.8 -1.5Z M0 6 L2.8 1.5 L-2.8 1.5Z" fill="#bcbcbc"/></svg>
<span class="t" style="left:902.5px;top:32.36px;color:#000;font-size:10.5px;letter-spacing:-0.088px;text-shadow:0 1px 0 rgba(255,255,255,.17);">View</span>
<span class="t" style="left:944.1px;top:32.36px;color:#000;font-size:10.5px;letter-spacing:-0.516px;text-shadow:0 1px 0 rgba(255,255,255,.17);">Search</span>
<div class="b wm" style="left:986.5px;top:28.5px;width:109.5px;height:18px;border-radius:4px"></div>
<span class="t" style="left:993.5px;top:32.36px;color:#fff;font-size:10.5px;letter-spacing:-0.179px;text-shadow:0 1px 0 rgba(0,0,0,.5);">All Scenes</span>
<svg class="b" style="left:1085px;top:30.4px" width="10" height="14" viewBox="-5 -7 10 14"><path d="M0 -6 L2.8 -1.5 L-2.8 -1.5Z M0 6 L2.8 1.5 L-2.8 1.5Z" fill="#bcbcbc"/></svg>
<div class="b wt" style="left:1101px;top:28.5px;width:80px;height:18px;border-radius:4px 0 0 4px"></div>
<svg class="b" style="left:1104px;top:29.5px;" width="16.0" height="16.0" viewBox="0 0 16 16"><path d="M2 14.4L7.4 8.6" stroke="#7a3c0a" stroke-width="2.6" stroke-linecap="round"/><path d="M2 14.4L7.4 8.6" stroke="#f0903a" stroke-width="1.4" stroke-linecap="round"/><circle cx="10" cy="5.8" r="4.3" fill="#d8d8e4" stroke="#3a3a3a" stroke-width="1.1"/><circle cx="10.8" cy="6.6" r="2.2" fill="#c08080" opacity=".7"/><circle cx="8.8" cy="4.6" r="1.6" fill="#fff"/></svg>
<svg class="b" style="left:1162px;top:27px;" width="12" height="12" viewBox="0 0 12 12"><path d="M2 0 L12 10 M5 0 L12 7 M8 0 L12 4" stroke="#cfcfcf" stroke-width="1" fill="none"/><path d="M3.4 0 L12 8.6 M6.4 0 L12 5.6 M9.4 0 L12 2.6" stroke="#2a2a2a" stroke-width="1" fill="none"/></svg>
<div class="b" style="left:868px;top:59.4px;width:9px;height:1px;background:#555"></div>
<svg class="b" style="left:859.0px;top:54.8px;" width="9" height="9" viewBox="0 0 9 9"><circle cx="4.5" cy="4.5" r="3.9" fill="#e8e8e8" stroke="#1a1a1a" stroke-width=".9"/><path d="M1.9 4.5H7.1" stroke="#111" stroke-width="1.2"/></svg>
<svg class="b" style="left:874px;top:50.5px;" width="18" height="18" viewBox="0 0 18 18"><circle cx="9" cy="9" r="8.4" fill="#d8d8d8" opacity=".45"/></svg>
<svg class="b" style="left:876.5px;top:52.2px;" width="14.0" height="14.0" viewBox="0 0 14 14"><circle cx="2.6" cy="2.6" r="1.9" fill="#e6e04a" stroke="#fffbd0" stroke-width=".5"/><rect x="6.6" y="1.2" width="5.6" height="9.4" rx="2.4" fill="#2f6fd2"/><rect x="7.2" y="1.6" width="2.2" height="8.4" rx="1.1" fill="#8fb6ee"/><ellipse cx="9.4" cy="2.4" rx="2.5" ry="1.1" fill="#cfe0f8"/><circle cx="4.8" cy="9.6" r="3.6" fill="#d8d8d8" stroke="#2a2a2a" stroke-width=".9"/><circle cx="3.9" cy="8.6" r="1.6" fill="#fff"/></svg>
<span class="t" style="left:893.5px;top:53.96px;color:#000;font-size:10.5px;letter-spacing:-0.570px;text-shadow:0 1px 0 rgba(255,255,255,.17);">Scene</span>
<div class="b" style="left:880.3px;top:68px;width:1px;height:65px;background:#555"></div>
<svg class="b" style="left:881.9px;top:73.3px;" width="9" height="9" viewBox="0 0 9 9"><circle cx="4.5" cy="4.5" r="3.9" fill="#e8e8e8" stroke="#1a1a1a" stroke-width=".9"/><path d="M1.9 4.5H7.1" stroke="#111" stroke-width="1.2"/><path d="M4.5 1.9V7.1" stroke="#111" stroke-width="1.2"/></svg>
<svg class="b" style="left:893.6px;top:70.4px;" width="15" height="15" viewBox="0 0 15 15"><rect x="4" y="4.2" width="9.6" height="9.2" fill="#e6dcb8" stroke="#3a3a3a" stroke-width=".8" transform="rotate(12 9 9)"/><rect x="1" y="1" width="10" height="9.6" fill="#e9e9e9" stroke="#333" stroke-width=".9"/><rect x="2.2" y="2.2" width="7.6" height="7.2" fill="#f8f8f8"/><rect x="2" y="2" width="2.4" height="1.3" fill="#f5a623"/><rect x="6.4" y="2.4" width="2.2" height="5" fill="#2f6fd2"/><circle cx="4.8" cy="7.6" r="1.7" fill="#ddd" stroke="#333" stroke-width=".6"/></svg>
<span class="t" style="left:912.0px;top:72.36px;color:#000;font-size:10.5px;letter-spacing:-0.335px;text-shadow:0 1px 0 rgba(255,255,255,.17);">RenderLayers</span>
<div class="b" style="left:983.6px;top:72px;width:1px;height:12px;background:#444"></div>
<svg class="b" style="left:990.5px;top:69px;" width="18" height="18" viewBox="0 0 18 18"><circle cx="9" cy="9" r="8.2" fill="#d8d8d8" opacity=".4"/></svg>
<svg class="b" style="left:992.6px;top:70.4px;" width="15" height="15" viewBox="0 0 15 15"><rect x="4" y="4.2" width="9.6" height="9.2" fill="#e6dcb8" stroke="#3a3a3a" stroke-width=".8" transform="rotate(12 9 9)"/><rect x="1" y="1" width="10" height="9.6" fill="#e9e9e9" stroke="#333" stroke-width=".9"/><rect x="2.2" y="2.2" width="7.6" height="7.2" fill="#f8f8f8"/><rect x="2" y="2" width="2.4" height="1.3" fill="#f5a623"/><rect x="6.4" y="2.4" width="2.2" height="5" fill="#2f6fd2"/><circle cx="4.8" cy="7.6" r="1.7" fill="#ddd" stroke="#333" stroke-width=".6"/></svg>
<svg class="b" style="left:893.3px;top:88.4px;" width="16" height="16" viewBox="0 0 16 16"><circle cx="8" cy="8" r="7.4" fill="#9a9aae" opacity=".55"/><circle cx="8" cy="8" r="6.2" fill="#5a90d8" stroke="#2a4a88" stroke-width=".7"/><path d="M4.2 4.6Q6 3 8.2 3.6L9 5.6L7.2 7.4L5.4 7.2L4.4 9L3.2 7Z" fill="#3d8a3a"/><path d="M9.4 8.2L12 8L12.6 10L10.8 12.6L9.4 10.6Z" fill="#3d8a3a"/><path d="M6 10.4L7.6 10.8L7.2 12.8L5.8 12Z" fill="#3d8a3a"/><circle cx="6" cy="5.4" r="3" fill="#fff" opacity=".25"/></svg>
<span class="t" style="left:912.0px;top:90.66px;color:#000;font-size:10.5px;letter-spacing:-0.159px;text-shadow:0 1px 0 rgba(255,255,255,.17);">World</span>
<div class="b" style="left:885px;top:113.6px;width:10px;height:1px;background:#555"></div>
<svg class="b" style="left:877.1px;top:109.5px;" width="9" height="9" viewBox="0 0 9 9"><circle cx="4.5" cy="4.5" r="3.9" fill="#e8e8e8" stroke="#1a1a1a" stroke-width=".9"/><path d="M1.9 4.5H7.1" stroke="#111" stroke-width="1.2"/><path d="M4.5 1.9V7.1" stroke="#111" stroke-width="1.2"/></svg>
<svg class="b" style="left:895px;top:108px;" width="13" height="13" viewBox="0 0 13 13"><path d="M1.6 1.8H11.4L6.5 11.2Z" fill="none" stroke="#a85400" stroke-width="2.6" stroke-linejoin="round"/><path d="M1.6 1.8H11.4L6.5 11.2Z" fill="none" stroke="#ff9a33" stroke-width="1.5" stroke-linejoin="round"/><circle cx="1.6" cy="1.8" r="1.1" fill="#fff"/><circle cx="11.4" cy="1.8" r="1.1" fill="#fff"/><circle cx="6.5" cy="11.2" r="1.1" fill="#fff"/></svg>
<span class="t" style="left:912.0px;top:108.96px;color:#000;font-size:10.5px;letter-spacing:0.009px;text-shadow:0 1px 0 rgba(255,255,255,.17);">chair</span>
<div class="b" style="left:944.3px;top:108.5px;width:1px;height:12px;background:#444"></div>
<svg class="b" style="left:954.3px;top:108px;" width="14" height="13" viewBox="0 0 14 13"><path d="M1.8 2H12.2L7 11.2Z" fill="none" stroke="#4a4a4a" stroke-width="1.1"/><circle cx="1.8" cy="2" r="1.3" fill="#d0d0d0" stroke="#333" stroke-width=".5"/><circle cx="12.2" cy="2" r="1.3" fill="#d0d0d0" stroke="#333" stroke-width=".5"/><circle cx="7" cy="11.2" r="1.3" fill="#d0d0d0" stroke="#333" stroke-width=".5"/></svg>
<div class="b" style="left:885px;top:132px;width:10px;height:1px;background:#555"></div>
<svg class="b" style="left:877.1px;top:127.9px;" width="9" height="9" viewBox="0 0 9 9"><circle cx="4.5" cy="4.5" r="3.9" fill="#e8e8e8" stroke="#1a1a1a" stroke-width=".9"/><path d="M1.9 4.5H7.1" stroke="#111" stroke-width="1.2"/><path d="M4.5 1.9V7.1" stroke="#111" stroke-width="1.2"/></svg>
<svg class="b" style="left:895px;top:126.4px;" width="13" height="13" viewBox="0 0 13 13"><path d="M1.6 1.8H11.4L6.5 11.2Z" fill="none" stroke="#a85400" stroke-width="2.6" stroke-linejoin="round"/><path d="M1.6 1.8H11.4L6.5 11.2Z" fill="none" stroke="#ff9a33" stroke-width="1.5" stroke-linejoin="round"/><circle cx="1.6" cy="1.8" r="1.1" fill="#fff"/><circle cx="11.4" cy="1.8" r="1.1" fill="#fff"/><circle cx="6.5" cy="11.2" r="1.1" fill="#fff"/></svg>
<span class="t" style="left:912.0px;top:128.16px;color:#fff;font-size:10.5px;letter-spacing:-0.362px;">seam</span>
<div class="b" style="left:945.8px;top:127px;width:1px;height:12px;background:#444"></div>
<svg class="b" style="left:956px;top:126.4px;" width="14" height="13" viewBox="0 0 14 13"><path d="M1.8 2H12.2L7 11.2Z" fill="none" stroke="#4a4a4a" stroke-width="1.1"/><circle cx="1.8" cy="2" r="1.3" fill="#d0d0d0" stroke="#333" stroke-width=".5"/><circle cx="12.2" cy="2" r="1.3" fill="#d0d0d0" stroke="#333" stroke-width=".5"/><circle cx="7" cy="11.2" r="1.3" fill="#d0d0d0" stroke="#333" stroke-width=".5"/></svg>
<svg class="b" style="left:974.5px;top:125.5px;" width="14" height="14" viewBox="0 0 14 14"><circle cx="11.80" cy="7.00" r="1.35" fill="#fff" stroke="#111" stroke-width=".9"/><circle cx="10.39" cy="10.39" r="1.35" fill="#fff" stroke="#111" stroke-width=".9"/><circle cx="7.00" cy="11.80" r="1.35" fill="#fff" stroke="#111" stroke-width=".9"/><circle cx="3.61" cy="10.39" r="1.35" fill="#fff" stroke="#111" stroke-width=".9"/><circle cx="2.20" cy="7.00" r="1.35" fill="#fff" stroke="#111" stroke-width=".9"/><circle cx="3.61" cy="3.61" r="1.35" fill="#fff" stroke="#111" stroke-width=".9"/><circle cx="7.00" cy="2.20" r="1.35" fill="#fff" stroke="#111" stroke-width=".9"/><circle cx="10.39" cy="3.61" r="1.35" fill="#fff" stroke="#111" stroke-width=".9"/><circle cx="7" cy="7" r="1.35" fill="#fff" stroke="#111" stroke-width=".9"/></svg>
<svg class="b" style="left:1122px;top:109.2px;" width="14" height="10" viewBox="0 0 14 10"><path d="M.6 5Q7 -1.6 13.4 5Q7 11.2 .6 5Z" fill="#f2f2f2" stroke="#2a2a2a" stroke-width=".8"/><circle cx="7" cy="4.6" r="2.5" fill="#6a6a6a"/><circle cx="7" cy="4.6" r="1.2" fill="#111"/></svg>
<svg class="b" style="left:1144px;top:108.2px;" width="9" height="13" viewBox="0 0 9 13"><path d="M.8 .8L.8 10L3 8L4.8 12L6.4 11.3L4.6 7.4L7.6 7.2Z" fill="#f4f4f4" stroke="#111" stroke-width=".9" stroke-linejoin="round"/></svg>
<svg class="b" style="left:1159px;top:109.60000000000001px;" width="13" height="11" viewBox="0 0 13 11"><rect x=".6" y="2" width="11.8" height="8.2" rx="1" fill="#d8d8d8" stroke="#222" stroke-width=".9"/><rect x="2" y=".6" width="4" height="2" fill="#bbb" stroke="#222" stroke-width=".6"/><circle cx="6.6" cy="6.2" r="2.9" fill="#444" stroke="#111" stroke-width=".6"/><circle cx="6.6" cy="6.2" r="1.5" fill="#4a78c8"/><circle cx="3" cy="3.6" r=".9" fill="#e01010"/><rect x="9.4" y="3" width="2" height="1.4" fill="#f4f4f4"/></svg>
<svg class="b" style="left:1122px;top:127.6px;" width="14" height="10" viewBox="0 0 14 10"><path d="M.6 5Q7 -1.6 13.4 5Q7 11.2 .6 5Z" fill="#f2f2f2" stroke="#2a2a2a" stroke-width=".8"/><circle cx="7" cy="4.6" r="2.5" fill="#6a6a6a"/><circle cx="7" cy="4.6" r="1.2" fill="#111"/></svg>
<svg class="b" style="left:1144px;top:126.6px;" width="9" height="13" viewBox="0 0 9 13"><path d="M.8 .8L.8 10L3 8L4.8 12L6.4 11.3L4.6 7.4L7.6 7.2Z" fill="#f4f4f4" stroke="#111" stroke-width=".9" stroke-linejoin="round"/></svg>
<svg class="b" style="left:1159px;top:128.0px;" width="13" height="11" viewBox="0 0 13 11"><rect x=".6" y="2" width="11.8" height="8.2" rx="1" fill="#d8d8d8" stroke="#222" stroke-width=".9"/><rect x="2" y=".6" width="4" height="2" fill="#bbb" stroke="#222" stroke-width=".6"/><circle cx="6.6" cy="6.2" r="2.9" fill="#444" stroke="#111" stroke-width=".6"/><circle cx="6.6" cy="6.2" r="1.5" fill="#4a78c8"/><circle cx="3" cy="3.6" r=".9" fill="#e01010"/><rect x="9.4" y="3" width="2" height="1.4" fill="#f4f4f4"/></svg>
<svg class="b" style="left:856px;top:283px;" width="12" height="12" viewBox="0 0 12 12"><path d="M0 2 L10 12 M0 5 L7 12 M0 8 L4 12" stroke="#cfcfcf" stroke-width="1" fill="none"/><path d="M0 3.4 L8.6 12 M0 6.4 L5.6 12 M0 9.4 L2.6 12" stroke="#333" stroke-width="1" fill="none"/></svg>
<div class="b" style="left:856px;top:293.9px;width:318px;height:1.1px;background:#868686"></div>
<div class="b" style="left:856px;top:295px;width:318px;height:1.25px;background:#0a0a0a"></div>
<div class="b" style="left:856px;top:296.25px;width:318px;height:0.8px;background:#585858"></div>
<div class="b hdr" style="left:856px;top:297px;width:318px;height:22px;"></div>
<div class="b" style="left:856px;top:297px;width:318px;height:1.3px;background:#7e7e7e"></div>
<div class="b" style="left:856px;top:319px;width:318px;height:481px;background:#727272"></div>
<div class="b" style="left:856px;top:318.6px;width:318px;height:1.2px;background:#666"></div>
<div class="b" style="left:856px;top:319.8px;width:318px;height:1.3px;background:#7a7a7a"></div>
<div class="b" style="left:856px;top:296px;width:1px;height:504px;background:#7e7e7e"></div>
<svg class="b" style="left:1162px;top:297px;" width="12" height="12" viewBox="0 0 12 12"><path d="M2 0 L12 10 M5 0 L12 7 M8 0 L12 4" stroke="#cfcfcf" stroke-width="1" fill="none"/><path d="M3.4 0 L12 8.6 M6.4 0 L12 5.6 M9.4 0 L12 2.6" stroke="#2a2a2a" stroke-width="1" fill="none"/></svg>
<div class="b wm" style="left:864px;top:299px;width:28px;height:18px;border-radius:4px"></div>
<svg class="b" style="left:868.5px;top:301px;" width="14" height="14" viewBox="0 0 14 14"><rect x=".8" y="1.6" width="11" height="4" rx="2" fill="#4a4a4a" stroke="#f2f2f2" stroke-width="1.1"/><rect x="8.4" y="2.4" width="2.4" height="2.4" fill="#fff"/><rect x=".8" y="8.2" width="11" height="4.4" rx="2.2" fill="#f2f2f2" stroke="#f2f2f2" stroke-width="1"/><rect x="3.6" y="9.4" width="5.4" height="2" fill="#6a6a6a"/></svg>
<svg class="b" style="left:881.2px;top:300.8px" width="10" height="14" viewBox="-5 -7 10 14"><path d="M0 -6 L2.8 -1.5 L-2.8 -1.5Z M0 6 L2.8 1.5 L-2.8 1.5Z" fill="#bcbcbc"/></svg>
<div class="b wm" style="left:899px;top:299px;width:220.4px;height:18px;border-radius:4px;background:linear-gradient(#5a5a5a,#3c3c3c)"></div>
<div class="b" style="left:917.3px;top:300px;width:1px;height:16px;background:#2b2b2b"></div>
<div class="b" style="left:935.7px;top:300px;width:1px;height:16px;background:#2b2b2b"></div>
<div class="b" style="left:954.0px;top:300px;width:1px;height:16px;background:#2b2b2b"></div>
<div class="b" style="left:972.3px;top:300px;width:1px;height:16px;background:#2b2b2b"></div>
<div class="b" style="left:990.6px;top:300px;width:1px;height:16px;background:#2b2b2b"></div>
<div class="b" style="left:1009.0px;top:300px;width:1px;height:16px;background:#2b2b2b"></div>
<div class="b" style="left:1027.3px;top:300px;width:1px;height:16px;background:#2b2b2b"></div>
<div class="b" style="left:1045.6px;top:300px;width:1px;height:16px;background:#2b2b2b"></div>
<div class="b" style="left:1064.0px;top:300px;width:1px;height:16px;background:#2b2b2b"></div>
<div class="b" style="left:1082.3px;top:300px;width:1px;height:16px;background:#2b2b2b"></div>
<div class="b" style="left:1100.6px;top:300px;width:1px;height:16px;background:#2b2b2b"></div>
<div class="b" style="left:1045.4px;top:300px;width:18.3px;height:16px;background:#5680c2"></div>
<svg class="b" style="opacity:.62;left:901.5649999999999px;top:302px;" width="14" height="13" viewBox="0 0 14 13"><rect x=".8" y="3" width="12.4" height="8.6" rx="1" fill="#cfcfcf" stroke="#222" stroke-width=".9"/><rect x="2" y="1.4" width="4.4" height="2" fill="#b8b8b8" stroke="#222" stroke-width=".6"/><circle cx="7.4" cy="7.4" r="3.1" fill="#3a3a3a" stroke="#111" stroke-width=".6"/><circle cx="7.4" cy="7.4" r="1.7" fill="#b03030"/><circle cx="6.8" cy="6.8" r=".7" fill="#f4c0c0"/><circle cx="3" cy="4.8" r=".8" fill="#e01010"/><rect x="10" y="4" width="2.2" height="1.4" fill="#f4f4f4"/></svg>
<svg class="b" style="opacity:.62;left:919.095px;top:300.6px;" width="15" height="15" viewBox="0 0 15 15"><rect x="4" y="4.2" width="9.6" height="9.2" fill="#e6dcb8" stroke="#3a3a3a" stroke-width=".8" transform="rotate(12 9 9)"/><rect x="1" y="1" width="10" height="9.6" fill="#e9e9e9" stroke="#333" stroke-width=".9"/><rect x="2.2" y="2.2" width="7.6" height="7.2" fill="#f8f8f8"/><rect x="2" y="2" width="2.4" height="1.3" fill="#f5a623"/><rect x="6.4" y="2.4" width="2.2" height="5" fill="#2f6fd2"/><circle cx="4.8" cy="7.6" r="1.7" fill="#ddd" stroke="#333" stroke-width=".6"/></svg>
<svg class="b" style="opacity:.62;left:938.225px;top:301px;" width="14.0" height="14.0" viewBox="0 0 14 14"><circle cx="2.6" cy="2.6" r="1.9" fill="#e6e04a" stroke="#fffbd0" stroke-width=".5"/><rect x="6.6" y="1.2" width="5.6" height="9.4" rx="2.4" fill="#2f6fd2"/><rect x="7.2" y="1.6" width="2.2" height="8.4" rx="1.1" fill="#8fb6ee"/><ellipse cx="9.4" cy="2.4" rx="2.5" ry="1.1" fill="#cfe0f8"/><circle cx="4.8" cy="9.6" r="3.6" fill="#d8d8d8" stroke="#2a2a2a" stroke-width=".9"/><circle cx="3.9" cy="8.6" r="1.6" fill="#fff"/></svg>
<svg class="b" style="opacity:.62;left:955.555px;top:300px;" width="16" height="16" viewBox="0 0 16 16"><circle cx="8" cy="8" r="6.0" fill="#5a90d8" stroke="#2a4a88" stroke-width=".7"/><path d="M4.2 4.6Q6 3 8.2 3.6L9 5.6L7.2 7.4L5.4 7.2L4.4 9L3.2 7Z" fill="#3d8a3a"/><path d="M9.4 8.2L12 8L12.6 10L10.8 12.6L9.4 10.6Z" fill="#3d8a3a"/><path d="M6 10.4L7.6 10.8L7.2 12.8L5.8 12Z" fill="#3d8a3a"/><circle cx="6" cy="5.4" r="3" fill="#fff" opacity=".25"/></svg>
<svg class="b" style="opacity:.62;left:975.385px;top:301.6px;" width="13.0" height="13.0" viewBox="0 0 13 13"><path d="M.8 3 L6.5 .8 L12.2 3 L12.2 9.8 L6.5 12.4 L.8 9.8Z" fill="#f0a13c" stroke="#7a4a10" stroke-width=".7"/><path d="M6.5 5.2 L12.2 3 L12.2 9.8 L6.5 12.4Z" fill="#c46c12"/><path d="M.8 3L6.5 5.2L12.2 3L6.5 .8Z" fill="#ffd9a0"/><path d="M1.6 4.2L5.8 5.8V11L1.6 9.2Z" fill="#fbe3c0" opacity=".85"/></svg>
<svg class="b" style="opacity:.62;left:992.7149999999999px;top:301px;" width="15" height="14" viewBox="0 0 15 14"><g fill="none" stroke="#2a2a2a" stroke-width="3.2"><rect x="1.4" y="6.6" width="7.6" height="4.6" rx="2.3" transform="rotate(-35 5.2 8.9)"/><rect x="6.2" y="3" width="7.6" height="4.6" rx="2.3" transform="rotate(-35 10 5.3)"/></g><g fill="none" stroke="#c8c8c8" stroke-width="1.5"><rect x="1.4" y="6.6" width="7.6" height="4.6" rx="2.3" transform="rotate(-35 5.2 8.9)"/><rect x="6.2" y="3" width="7.6" height="4.6" rx="2.3" transform="rotate(-35 10 5.3)"/></g></svg>
<svg class="b" style="opacity:.62;left:1011.545px;top:301px;" width="14" height="14" viewBox="0 0 14 14"><path d="M2.2 12L8 6.2" stroke="#27406e" stroke-width="3.8" stroke-linecap="round"/><path d="M2.2 12L8 6.2" stroke="#6f98d8" stroke-width="2.2" stroke-linecap="round"/><path d="M12.6 3.2L10.6 5L9 3.6L10.6 1.6A3.4 3.4 0 1 0 12.6 3.2Z" fill="#6f98d8" stroke="#27406e" stroke-width=".8"/></svg>
<svg class="b" style="opacity:.62;left:1029.875px;top:301.6px;" width="14" height="13" viewBox="0 0 14 13"><path d="M1.8 2H12.2L7 11.2Z" fill="none" stroke="#c8c8c8" stroke-width="1.1"/><circle cx="1.8" cy="2" r="1.3" fill="#f4f4f4" stroke="#222" stroke-width=".5"/><circle cx="12.2" cy="2" r="1.3" fill="#f4f4f4" stroke="#222" stroke-width=".5"/><circle cx="7" cy="11.2" r="1.3" fill="#f4f4f4" stroke="#222" stroke-width=".5"/></svg>
<svg class="b" style="left:1048.205px;top:301px;" width="14" height="14" viewBox="0 0 14 14"><defs><radialGradient id="gt8" cx=".34" cy=".3" r=".8"><stop offset="0" stop-color="#fff"/><stop offset=".45" stop-color="#e4e4e4"/><stop offset="1" stop-color="#9a9a9a"/></radialGradient><radialGradient id="ht8" cx=".34" cy=".3" r=".75"><stop offset="0" stop-color="#fff" stop-opacity=".75"/><stop offset=".6" stop-color="#fff" stop-opacity="0"/><stop offset="1" stop-color="#000" stop-opacity=".25"/></radialGradient><clipPath id="ct8"><circle cx="7" cy="7" r="5.8"/></clipPath></defs><circle cx="7" cy="7" r="5.8" fill="url(#gt8)"/><g clip-path="url(#ct8)"><path d="M7 7V0H14V7Z" fill="#8e5a4e"/><path d="M7 7H0V14H7Z" fill="#c0786a"/><path d="M7 7H14V14H7Z" fill="#f2a684"/><circle cx="7" cy="7" r="5.8" fill="url(#ht8)"/></g><circle cx="7" cy="7" r="5.8" fill="none" stroke="#262626" stroke-width=".9"/></svg>
<svg class="b" style="opacity:.62;left:1067.0349999999999px;top:301.6px;" width="13" height="13" viewBox="0 0 13 13"><rect x=".5" y=".5" width="12" height="12" fill="#e4e0e0" stroke="#555" stroke-width=".6"/><rect x="0.5" y="0.5" width="3" height="3" fill="#8a1a1a"/><rect x="6.5" y="0.5" width="3" height="3" fill="#8a1a1a"/><rect x="3.5" y="3.5" width="3" height="3" fill="#8a1a1a"/><rect x="9.5" y="3.5" width="3" height="3" fill="#8a1a1a"/><rect x="0.5" y="6.5" width="3" height="3" fill="#8a1a1a"/><rect x="6.5" y="6.5" width="3" height="3" fill="#8a1a1a"/><rect x="3.5" y="9.5" width="3" height="3" fill="#8a1a1a"/><rect x="9.5" y="9.5" width="3" height="3" fill="#8a1a1a"/></svg>
<svg class="b" style="opacity:.62;left:1084.365px;top:300.5px;" width="15" height="15" viewBox="0 0 15 15"><path d="M4 0.6000000000000001L4.5 3.5L7.4 4L4.5 4.5L4 7.4L3.5 4.5L0.6000000000000001 4L3.5 3.5Z" fill="#f6e9a0" stroke="#c8b050" stroke-width=".4"/><path d="M11 0.6000000000000001L11.5 3.1L14 3.6L11.5 4.1L11 6.6L10.5 4.1L8 3.6L10.5 3.1Z" fill="#f6e9a0" stroke="#c8b050" stroke-width=".4"/><path d="M4.4 8L4.9 10.5L7.4 11L4.9 11.5L4.4 14L3.9000000000000004 11.5L1.4000000000000004 11L3.9000000000000004 10.5Z" fill="#f6e9a0" stroke="#c8b050" stroke-width=".4"/><path d="M10.4 7.0L10.9 10.1L14.0 10.6L10.9 11.1L10.4 14.2L9.9 11.1L6.800000000000001 10.6L9.9 10.1Z" fill="#f6e9a0" stroke="#c8b050" stroke-width=".4"/></svg>
<svg class="b" style="opacity:.62;left:1103.195px;top:301px;" width="14" height="14" viewBox="0 0 14 14"><path d="M1.6 7.4L5.4 12L10.4 3.6" fill="none" stroke="#4a74b8" stroke-width="2.2"/><circle cx="10.6" cy="3.6" r="2.5" fill="#cfcfcf" stroke="#666" stroke-width=".6"/><circle cx="10" cy="3" r="1" fill="#fff"/></svg>
<svg class="b" style="left:864.6px;top:329px;" width="16" height="16" viewBox="0 0 16 16"><path d="M1.2 15L6.6 9.6" stroke="#1e1e1e" stroke-width="2.6" stroke-linecap="round"/><path d="M1.4 14.8L6.6 9.6" stroke="#f0f0f0" stroke-width="1.2" stroke-linecap="round"/><g fill="#ececec" stroke="#1e1e1e" stroke-width=".9" stroke-linejoin="round"><path d="M3.4 7.6L5 6L10.2 11.2L8.6 12.8Z"/><path d="M6.3 7.3L9.9 3.7L12.5 6.3L8.9 9.9Z"/><path d="M8.4 2.6L10 1L15.2 6.2L13.6 7.8Z"/></g></svg>
<svg class="b" style="left:885.5px;top:330.2px;" width="14.0" height="14.0" viewBox="0 0 14 14"><circle cx="2.6" cy="2.6" r="1.9" fill="#e6e04a" stroke="#fffbd0" stroke-width=".5"/><rect x="6.6" y="1.2" width="5.6" height="9.4" rx="2.4" fill="#2f6fd2"/><rect x="7.2" y="1.6" width="2.2" height="8.4" rx="1.1" fill="#8fb6ee"/><ellipse cx="9.4" cy="2.4" rx="2.5" ry="1.1" fill="#cfe0f8"/><circle cx="4.8" cy="9.6" r="3.6" fill="#d8d8d8" stroke="#2a2a2a" stroke-width=".9"/><circle cx="3.9" cy="8.6" r="1.6" fill="#fff"/></svg>
<svg class="b" style="left:904.5px;top:333.1px;" width="5" height="7" viewBox="0 0 5 7"><path d="M.6 .4L4 3.5L.6 6.6Z" fill="#3a3a3a"/></svg>
<svg class="b" style="left:922.8px;top:330.2px;" width="13.0" height="13.0" viewBox="0 0 13 13"><path d="M.8 3 L6.5 .8 L12.2 3 L12.2 9.8 L6.5 12.4 L.8 9.8Z" fill="#f0a13c" stroke="#7a4a10" stroke-width=".7"/><path d="M6.5 5.2 L12.2 3 L12.2 9.8 L6.5 12.4Z" fill="#c46c12"/><path d="M.8 3L6.5 5.2L12.2 3L6.5 .8Z" fill="#ffd9a0"/><path d="M1.6 4.2L5.8 5.8V11L1.6 9.2Z" fill="#fbe3c0" opacity=".85"/></svg>
<span class="t" style="left:940.4px;top:331.36px;color:#000;font-size:10.5px;letter-spacing:-0.362px;text-shadow:0 1px 0 rgba(255,255,255,.17);">seam</span>
<svg class="b" style="left:979px;top:333.1px;" width="5" height="7" viewBox="0 0 5 7"><path d="M.6 .4L4 3.5L.6 6.6Z" fill="#3a3a3a"/></svg>
<svg class="b" style="left:997.2px;top:329.8px;" width="14" height="14" viewBox="0 0 14 14"><defs><radialGradient id="gbc" cx=".34" cy=".3" r=".8"><stop offset="0" stop-color="#fff"/><stop offset=".45" stop-color="#e4e4e4"/><stop offset="1" stop-color="#9a9a9a"/></radialGradient><radialGradient id="hbc" cx=".34" cy=".3" r=".75"><stop offset="0" stop-color="#fff" stop-opacity=".75"/><stop offset=".6" stop-color="#fff" stop-opacity="0"/><stop offset="1" stop-color="#000" stop-opacity=".25"/></radialGradient><clipPath id="cbc"><circle cx="7" cy="7" r="5.8"/></clipPath></defs><circle cx="7" cy="7" r="5.8" fill="url(#gbc)"/><g clip-path="url(#cbc)"><path d="M7 7V0H14V7Z" fill="#8e5a4e"/><path d="M7 7H0V14H7Z" fill="#c0786a"/><path d="M7 7H14V14H7Z" fill="#f2a684"/><circle cx="7" cy="7" r="5.8" fill="url(#hbc)"/></g><circle cx="7" cy="7" r="5.8" fill="none" stroke="#262626" stroke-width=".9"/></svg>
<span class="t" style="left:1015.5px;top:331.36px;color:#000;font-size:10.5px;letter-spacing:-0.124px;text-shadow:0 1px 0 rgba(255,255,255,.17);">leather seams</span>
<div class="b" style="left:863px;top:361px;width:262.2px;height:94px;border-radius:4px;background:#808080;border:1px solid #3a3a3a;box-shadow:0 1px 0 rgba(255,255,255,.08)"></div>
<div class="b" style="left:868.5px;top:369px;width:251.5px;height:16.5px;border-radius:3px;background:#5680c2"></div>
<svg class="b" style="left:871.0px;top:369.59999999999997px;" width="15.2" height="15.2" viewBox="0 0 15.2 15.2"><defs><radialGradient id="bl1" cx=".4" cy=".34" r=".75"><stop offset="0" stop-color="#6e4a2c"/><stop offset=".55" stop-color="#5a3a20"/><stop offset="1" stop-color="#2e1c0e"/></radialGradient></defs><circle cx="7.6" cy="7.6" r="6.6" fill="url(#bl1)"/></svg>
<svg class="b" style="left:871.0px;top:388.0px;" width="15.2" height="15.2" viewBox="0 0 15.2 15.2"><defs><radialGradient id="bl2" cx=".4" cy=".34" r=".75"><stop offset="0" stop-color="#c4c2c6"/><stop offset=".55" stop-color="#b4b2b6"/><stop offset="1" stop-color="#8e8c90"/></radialGradient></defs><circle cx="7.6" cy="7.6" r="6.6" fill="url(#bl2)"/></svg>
<svg class="b" style="left:871.0px;top:406.59999999999997px;" width="15.2" height="15.2" viewBox="0 0 15.2 15.2"><defs><radialGradient id="bl3" cx=".4" cy=".34" r=".75"><stop offset="0" stop-color="#d0c8c6"/><stop offset=".55" stop-color="#c0b8b6"/><stop offset="1" stop-color="#948c8a"/></radialGradient></defs><circle cx="7.6" cy="7.6" r="6.6" fill="url(#bl3)"/></svg>
<span class="t" style="left:889.0px;top:372.26px;color:#fff;font-size:10.5px;letter-spacing:-0.140px;">leather seams</span>
<span class="t" style="left:889.0px;top:390.26px;color:#000;font-size:10.5px;letter-spacing:-0.010px;text-shadow:0 1px 0 rgba(255,255,255,.17);">cloth thread</span>
<span class="t" style="left:889.0px;top:408.66px;color:#000;font-size:10.5px;letter-spacing:0.153px;text-shadow:0 1px 0 rgba(255,255,255,.17);">cloth</span>
<svg class="b" style="left:871px;top:439.5px;" width="10" height="10" viewBox="0 0 10 10"><circle cx="5" cy="5" r="4" fill="none" stroke="#4a4a4a" stroke-width=".9"/><path d="M5 3V7M3 5H7" stroke="#4a4a4a" stroke-width="1"/></svg>
<div class="b" style="left:996px;top:443.6px;width:13px;height:1px;background:#3a3a3a"></div>
<div class="b" style="left:996px;top:444.6px;width:13px;height:1px;background:#b8b8b8"></div>
<div class="b" style="left:996px;top:446.6px;width:13px;height:1px;background:#3a3a3a"></div>
<div class="b" style="left:996px;top:447.6px;width:13px;height:1px;background:#b8b8b8"></div>
<div class="b wb" style="left:1133px;top:361px;width:18px;height:18.3px;border-radius:4px 4px 0 0"></div>
<div class="b wb" style="left:1133px;top:378.3px;width:18px;height:18.6px;"></div>
<div class="b wb" style="left:1133px;top:396px;width:18px;height:19.6px;border-radius:0 0 4px 4px;background:linear-gradient(#4a4a4a,#333)"></div>
<svg class="b" style="left:1136px;top:364px;" width="12" height="12" viewBox="0 0 12 12"><path d="M6 1.2V10.8M1.2 6H10.8" stroke="#1e1e1e" stroke-width="3.4" fill="none"/><path d="M6 1.8V10.2M1.8 6H10.2" stroke="#f2f2f2" stroke-width="1.7" fill="none"/></svg>
<svg class="b" style="left:1136px;top:383px;" width="12" height="8" viewBox="0 0 12 8"><path d="M1.6 4H10.4" stroke="#1e1e1e" stroke-width="3.4"/><path d="M2.2 4H9.8" stroke="#f2f2f2" stroke-width="1.7"/></svg>
<svg class="b" style="left:1136px;top:400px;" width="12" height="11" viewBox="0 0 12 11"><path d="M1.6 2H9.4L6.6 9Z" fill="#0a0a0a"/><path d="M10.6 1.4L7.8 9.6" stroke="#d8d8d8" stroke-width="1"/></svg>
<div class="b wb" style="left:1133px;top:421.5px;width:18px;height:18.4px;border-radius:4px 4px 0 0"></div>
<div class="b wb" style="left:1133px;top:439.2px;width:18px;height:18.4px;border-radius:0 0 4px 4px"></div>
<svg class="b" style="left:1136px;top:425.5px;" width="12" height="10" viewBox="0 0 12 10"><path d="M6 1.6L10.8 7.6H1.2Z" fill="#f2f2f2" stroke="#1e1e1e" stroke-width=".9"/></svg>
<svg class="b" style="left:1136px;top:443.5px;" width="12" height="10" viewBox="0 0 12 10"><path d="M6 8.4L10.8 2.4H1.2Z" fill="#f2f2f2" stroke="#1e1e1e" stroke-width=".9"/></svg>
<div class="b wm" style="left:863.5px;top:463px;width:29px;height:18px;border-radius:4px 0 0 4px"></div>
<svg class="b" style="left:866.6px;top:464.8px;" width="14" height="14" viewBox="0 0 14 14"><defs><radialGradient id="gid" cx=".34" cy=".3" r=".8"><stop offset="0" stop-color="#fff"/><stop offset=".45" stop-color="#e4e4e4"/><stop offset="1" stop-color="#9a9a9a"/></radialGradient><radialGradient id="hid" cx=".34" cy=".3" r=".75"><stop offset="0" stop-color="#fff" stop-opacity=".75"/><stop offset=".6" stop-color="#fff" stop-opacity="0"/><stop offset="1" stop-color="#000" stop-opacity=".25"/></radialGradient><clipPath id="cid"><circle cx="7" cy="7" r="5.6"/></clipPath></defs><circle cx="7" cy="7" r="5.6" fill="url(#gid)"/><g clip-path="url(#cid)"><path d="M7 7V0H14V7Z" fill="#8e5a4e"/><path d="M7 7H0V14H7Z" fill="#c0786a"/><path d="M7 7H14V14H7Z" fill="#f2a684"/><circle cx="7" cy="7" r="5.6" fill="url(#hid)"/></g><circle cx="7" cy="7" r="5.6" fill="none" stroke="#262626" stroke-width=".9"/></svg>
<svg class="b" style="left:881.6px;top:464.8px" width="10" height="14" viewBox="-5 -7 10 14"><path d="M0 -6 L2.8 -1.5 L-2.8 -1.5Z M0 6 L2.8 1.5 L-2.8 1.5Z" fill="#bcbcbc"/></svg>
<div class="b wt" style="left:891.5px;top:463px;width:98.5px;height:18px;"></div>
<span class="t" style="left:898.3px;top:466.56px;color:#000;font-size:10.5px;letter-spacing:-0.157px;text-shadow:0 1px 0 rgba(255,255,255,.17);">leather seams</span>
<div class="b wb" style="left:989px;top:463px;width:19.6px;height:18px;"></div>
<span class="t" style="left:995.0px;top:466.56px;color:#000;font-size:10.5px;text-shadow:0 1px 0 rgba(255,255,255,.17);">F</span>
<div class="b wb" style="left:1007.6px;top:463px;width:19.2px;height:18px;"></div>
<div class="b wb" style="left:1025.8px;top:463px;width:19.4px;height:18px;border-radius:0 4px 4px 0"></div>
<svg class="b" style="left:1011.2px;top:465.8px;" width="12" height="12" viewBox="0 0 12 12"><path d="M6 1.2V10.8M1.2 6H10.8" stroke="#1e1e1e" stroke-width="3.4" fill="none"/><path d="M6 1.8V10.2M1.8 6H10.2" stroke="#f2f2f2" stroke-width="1.7" fill="none"/></svg>
<svg class="b" style="left:1029.4px;top:465.8px;" width="12" height="12" viewBox="0 0 12 12"><path d="M2 2L10 10M10 2L2 10" stroke="#1e1e1e" stroke-width="3.2" fill="none"/><path d="M2.5 2.5L9.5 9.5M9.5 2.5L2.5 9.5" stroke="#f2f2f2" stroke-width="1.6" fill="none"/></svg>
<div class="b wm" style="left:1052px;top:463px;width:99px;height:18px;border-radius:4px"></div>
<span class="t" style="left:1059.6px;top:466.56px;color:#fff;font-size:10.5px;letter-spacing:-0.096px;text-shadow:0 1px 0 rgba(0,0,0,.5);">Data</span>
<svg class="b" style="left:1140px;top:464.8px" width="10" height="14" viewBox="-5 -7 10 14"><path d="M0 -6 L2.8 -1.5 L-2.8 -1.5Z M0 6 L2.8 1.5 L-2.8 1.5Z" fill="#bcbcbc"/></svg>
<div class="b" style="left:860px;top:487.4px;width:294px;height:1px;background:#525252"></div>
<div class="b" style="left:860px;top:488.4px;width:294px;height:1px;background:#7c7c7c"></div>
<svg class="b" style="left:869px;top:496.3px;" width="5" height="7" viewBox="0 0 5 7"><path d="M.6 .4L4 3.5L.6 6.6Z" fill="#1a1a1a"/></svg>
<span class="t" style="left:879.0px;top:493.42px;color:#000;font-size:11.5px;letter-spacing:-0.149px;text-shadow:0 1px 0 rgba(255,255,255,.17);">Custom Properties</span>
<svg class="b" style="left:1138.4px;top:497.7px;" width="12" height="6" viewBox="0 0 12 6"><rect x="0" y="0" width="1.4" height="1.4" fill="#4a4a4a"/><rect x="0.9" y="0.9" width=".9" height=".9" fill="#8c8c8c"/><rect x="0" y="3" width="1.4" height="1.4" fill="#4a4a4a"/><rect x="0.9" y="3.9" width=".9" height=".9" fill="#8c8c8c"/><rect x="3" y="0" width="1.4" height="1.4" fill="#4a4a4a"/><rect x="3.9" y="0.9" width=".9" height=".9" fill="#8c8c8c"/><rect x="3" y="3" width="1.4" height="1.4" fill="#4a4a4a"/><rect x="3.9" y="3.9" width=".9" height=".9" fill="#8c8c8c"/><rect x="6" y="0" width="1.4" height="1.4" fill="#4a4a4a"/><rect x="6.9" y="0.9" width=".9" height=".9" fill="#8c8c8c"/><rect x="6" y="3" width="1.4" height="1.4" fill="#4a4a4a"/><rect x="6.9" y="3.9" width=".9" height=".9" fill="#8c8c8c"/><rect x="9" y="0" width="1.4" height="1.4" fill="#4a4a4a"/><rect x="9.9" y="0.9" width=".9" height=".9" fill="#8c8c8c"/><rect x="9" y="3" width="1.4" height="1.4" fill="#4a4a4a"/><rect x="9.9" y="3.9" width=".9" height=".9" fill="#8c8c8c"/></svg>
<div class="b" style="left:860px;top:509.4px;width:294px;height:1px;background:#525252"></div>
<div class="b" style="left:860px;top:510.4px;width:294px;height:1px;background:#7c7c7c"></div>
<svg class="b" style="left:866.4px;top:518.0px;" width="9" height="8" viewBox="0 0 9 8"><path d="M.3 .5H8.7L4.5 7.6Z" fill="#1a1a1a"/></svg>
<span class="t" style="left:879.0px;top:515.22px;color:#000;font-size:11.5px;letter-spacing:-0.318px;text-shadow:0 1px 0 rgba(255,255,255,.17);">Preview</span>
<svg class="b" style="left:1138.4px;top:519.6999999999999px;" width="12" height="6" viewBox="0 0 12 6"><rect x="0" y="0" width="1.4" height="1.4" fill="#4a4a4a"/><rect x="0.9" y="0.9" width=".9" height=".9" fill="#8c8c8c"/><rect x="0" y="3" width="1.4" height="1.4" fill="#4a4a4a"/><rect x="0.9" y="3.9" width=".9" height=".9" fill="#8c8c8c"/><rect x="3" y="0" width="1.4" height="1.4" fill="#4a4a4a"/><rect x="3.9" y="0.9" width=".9" height=".9" fill="#8c8c8c"/><rect x="3" y="3" width="1.4" height="1.4" fill="#4a4a4a"/><rect x="3.9" y="3.9" width=".9" height=".9" fill="#8c8c8c"/><rect x="6" y="0" width="1.4" height="1.4" fill="#4a4a4a"/><rect x="6.9" y="0.9" width=".9" height=".9" fill="#8c8c8c"/><rect x="6" y="3" width="1.4" height="1.4" fill="#4a4a4a"/><rect x="6.9" y="3.9" width=".9" height=".9" fill="#8c8c8c"/><rect x="9" y="0" width="1.4" height="1.4" fill="#4a4a4a"/><rect x="9.9" y="0.9" width=".9" height=".9" fill="#8c8c8c"/><rect x="9" y="3" width="1.4" height="1.4" fill="#4a4a4a"/><rect x="9.9" y="3.9" width=".9" height=".9" fill="#8c8c8c"/></svg>
<svg class="b" style="left:866px;top:540px;" width="250" height="101" viewBox="0 0 250 101"><defs><pattern id="pchk" width="24" height="24" patternUnits="userSpaceOnUse"><rect width="24" height="24" fill="#3b3b3b"/><rect x="12" width="12" height="12" fill="#464646"/><rect y="12" width="12" height="12" fill="#464646"/></pattern><clipPath id="pvc"><rect x="0" y="0" width="250" height="101" rx="4"/></clipPath><radialGradient id="pvs" cx=".4" cy=".35" r=".7"><stop offset="0" stop-color="#5a3a24"/><stop offset="1" stop-color="#1e1208"/></radialGradient><linearGradient id="pvf" x1="0" y1="0" x2="0" y2="1"><stop offset="0" stop-color="#202020"/><stop offset="1" stop-color="#2e2e2e"/></linearGradient></defs><g clip-path="url(#pvc)"><rect x="0" y="0" width="250" height="101" fill="url(#pchk)"/><path d="M0 101V82Q125 70 250 84V101Z" fill="url(#pvf)"/><path d="M200 101Q235 60 250 20V101Z" fill="#303030" opacity=".7"/><circle cx="125" cy="52" r="42" fill="url(#pvs)"/></g><rect x=".5" y=".5" width="249" height="100" rx="4" fill="none" stroke="#2b2b2b"/></svg>
<div class="b wm" style="left:1124px;top:540px;width:27.5px;height:110px;border-radius:4px;background:linear-gradient(#5a5a5a,#3c3c3c)"></div>
<div class="b" style="left:1125px;top:558px;width:25.5px;height:17.6px;background:#5680c2"></div>
<div class="b" style="left:1125px;top:556.8px;width:25.5px;height:1px;background:#2b2b2b"></div>
<div class="b" style="left:1125px;top:575.1px;width:25.5px;height:1px;background:#2b2b2b"></div>
<div class="b" style="left:1125px;top:593.5px;width:25.5px;height:1px;background:#2b2b2b"></div>
<div class="b" style="left:1125px;top:611.8px;width:25.5px;height:1px;background:#2b2b2b"></div>
<div class="b" style="left:1125px;top:630.1px;width:25.5px;height:1px;background:#2b2b2b"></div>
<svg class="b" style="left:1131px;top:542.6px;" width="14" height="13" viewBox="0 0 14 13"><defs><linearGradient id="pq" x1="0" y1="0" x2="1" y2="1"><stop offset="0" stop-color="#b8b8b8"/><stop offset="1" stop-color="#7c7c7c"/></linearGradient></defs><rect x="1" y=".6" width="11.6" height="11.4" fill="url(#pq)" stroke="#d0d0d0" stroke-width=".8"/></svg>
<svg class="b" style="left:1130.5px;top:559.5px;" width="14" height="14" viewBox="0 0 14 14"><defs><radialGradient id="pw" cx=".4" cy=".35" r=".7"><stop offset="0" stop-color="#fff"/><stop offset=".6" stop-color="#e0e0e0"/><stop offset="1" stop-color="#8a8a8a"/></radialGradient></defs><circle cx="7" cy="7" r="5.8" fill="url(#pw)" stroke="#1a1a1a" stroke-width=".9"/></svg>
<svg class="b" style="left:1131px;top:578px;" width="14" height="14" viewBox="0 0 14 14"><path d="M1.4 3.6L7 1L12.6 3.6V10.4L7 13L1.4 10.4Z" fill="#a8a8a8" stroke="#4a4a4a" stroke-width=".6"/><path d="M7 6.2L12.6 3.6V10.4L7 13Z" fill="#6e6e6e"/><path d="M1.4 3.6L7 6.2L12.6 3.6L7 1Z" fill="#c8c8c8"/></svg>
<svg class="b" style="left:1130.5px;top:596px;" width="15" height="14" viewBox="0 0 15 14"><path d="M4 1.6Q7.5 .4 11 1.6Q12 4 10.4 5.6L13.6 5.2L13.2 7L10 7.4L9.4 12.4H5.6L5 7.4L1.8 7L1.4 5.2L4.6 5.6Q3 4 4 1.6Z" fill="#c0c0c0" stroke="#3a3a3a" stroke-width=".6"/><circle cx="6" cy="3.6" r=".8" fill="#333"/><circle cx="9" cy="3.6" r=".8" fill="#333"/></svg>
<svg class="b" style="left:1131px;top:614.5px;" width="14" height="14" viewBox="0 0 14 14"><path d="M2.4 12.4Q1.6 6 5 1.6M6 12.4Q6 7.4 8.6 4.4M9.8 12.4Q10.2 9.4 12 7.4" fill="none" stroke="#c8c8c8" stroke-width="1.2" stroke-linecap="round"/></svg>
<svg class="b" style="left:1130.5px;top:632px;" width="15" height="15" viewBox="0 0 15 15"><ellipse cx="9.6" cy="3.6" rx="4" ry="2.4" fill="#8aa0c8"/><circle cx="3.6" cy="3" r="1.8" fill="#e6e04a"/><circle cx="6.6" cy="9.4" r="4.6" fill="#c8c8c8" stroke="#3a3a3a" stroke-width=".7"/><circle cx="5.4" cy="8" r="1.8" fill="#f4f4f4"/></svg>
<div class="b" style="left:983px;top:646.4px;width:13px;height:1px;background:#3a3a3a"></div>
<div class="b" style="left:983px;top:649.4px;width:13px;height:1px;background:#3a3a3a"></div>
<div class="b" style="left:860px;top:656.6px;width:294px;height:1px;background:#525252"></div>
<div class="b" style="left:860px;top:657.6px;width:294px;height:1px;background:#7c7c7c"></div>
<svg class="b" style="left:866.4px;top:663.8px;" width="9" height="8" viewBox="0 0 9 8"><path d="M.3 .5H8.7L4.5 7.6Z" fill="#1a1a1a"/></svg>
<span class="t" style="left:879.0px;top:661.62px;color:#000;font-size:11.5px;letter-spacing:-0.218px;text-shadow:0 1px 0 rgba(255,255,255,.17);">Surface</span>
<svg class="b" style="left:1138.4px;top:667.0px;" width="12" height="6" viewBox="0 0 12 6"><rect x="0" y="0" width="1.4" height="1.4" fill="#4a4a4a"/><rect x="0.9" y="0.9" width=".9" height=".9" fill="#8c8c8c"/><rect x="0" y="3" width="1.4" height="1.4" fill="#4a4a4a"/><rect x="0.9" y="3.9" width=".9" height=".9" fill="#8c8c8c"/><rect x="3" y="0" width="1.4" height="1.4" fill="#4a4a4a"/><rect x="3.9" y="0.9" width=".9" height=".9" fill="#8c8c8c"/><rect x="3" y="3" width="1.4" height="1.4" fill="#4a4a4a"/><rect x="3.9" y="3.9" width=".9" height=".9" fill="#8c8c8c"/><rect x="6" y="0" width="1.4" height="1.4" fill="#4a4a4a"/><rect x="6.9" y="0.9" width=".9" height=".9" fill="#8c8c8c"/><rect x="6" y="3" width="1.4" height="1.4" fill="#4a4a4a"/><rect x="6.9" y="3.9" width=".9" height=".9" fill="#8c8c8c"/><rect x="9" y="0" width="1.4" height="1.4" fill="#4a4a4a"/><rect x="9.9" y="0.9" width=".9" height=".9" fill="#8c8c8c"/><rect x="9" y="3" width="1.4" height="1.4" fill="#4a4a4a"/><rect x="9.9" y="3.9" width=".9" height=".9" fill="#8c8c8c"/></svg>
<span class="t" style="left:869.0px;top:690.36px;color:#000;font-size:10.5px;letter-spacing:-0.446px;text-shadow:0 1px 0 rgba(255,255,255,.17);">Surface:</span>
<div class="b wm" style="left:969px;top:686.3px;width:182px;height:18px;border-radius:4px"></div>
<span class="t" style="left:976.0px;top:690.26px;color:#fff;font-size:10.5px;letter-spacing:-0.347px;text-shadow:0 1px 0 rgba(0,0,0,.5);">Mix Shader</span>
<svg class="b" style="left:1137.6px;top:692.0999999999999px;" width="6" height="6" viewBox="0 0 6 6"><circle cx="3" cy="3" r="2.2" fill="#b0b0b0" stroke="#1e1e1e" stroke-width=".8"/></svg>
<svg class="b" style="left:862.8px;top:723.3px;" width="9" height="9" viewBox="0 0 9 9"><circle cx="4.5" cy="4.5" r="3.7" fill="#ececec" stroke="#1a1a1a" stroke-width="1"/><path d="M4.5 2.2V6.8M2.2 4.5H6.8" stroke="#111" stroke-width="1.3"/></svg>
<span class="t" style="left:879.0px;top:723.26px;color:#000;font-size:10.5px;letter-spacing:-0.474px;text-shadow:0 1px 0 rgba(255,255,255,.17);">Fac:</span>
<div class="b wm" style="left:969px;top:719.3px;width:182px;height:18px;border-radius:4px"></div>
<span class="t" style="left:976.0px;top:723.26px;color:#fff;font-size:10.5px;letter-spacing:-0.453px;text-shadow:0 1px 0 rgba(0,0,0,.5);">Fresnel</span>
<svg class="b" style="left:1137.6px;top:725.0999999999999px;" width="6" height="6" viewBox="0 0 6 6"><circle cx="3" cy="3" r="2.2" fill="#b0b0b0" stroke="#1e1e1e" stroke-width=".8"/></svg>
<svg class="b" style="left:862.8px;top:746.3px;" width="9" height="9" viewBox="0 0 9 9"><circle cx="4.5" cy="4.5" r="3.7" fill="#ececec" stroke="#1a1a1a" stroke-width="1"/><path d="M4.5 2.2V6.8M2.2 4.5H6.8" stroke="#111" stroke-width="1.3"/></svg>
<span class="t" style="left:879.0px;top:746.36px;color:#000;font-size:10.5px;letter-spacing:-0.483px;text-shadow:0 1px 0 rgba(255,255,255,.17);">Shader:</span>
<div class="b wm" style="left:969px;top:742.4px;width:182px;height:18px;border-radius:4px"></div>
<span class="t" style="left:976.0px;top:746.36px;color:#fff;font-size:10.5px;letter-spacing:-0.446px;text-shadow:0 1px 0 rgba(0,0,0,.5);">Diffuse BSDF</span>
<svg class="b" style="left:1137.6px;top:748.1999999999999px;" width="6" height="6" viewBox="0 0 6 6"><circle cx="3" cy="3" r="2.2" fill="#b0b0b0" stroke="#1e1e1e" stroke-width=".8"/></svg>
<svg class="b" style="left:862.8px;top:769.3px;" width="9" height="9" viewBox="0 0 9 9"><circle cx="4.5" cy="4.5" r="3.7" fill="#ececec" stroke="#1a1a1a" stroke-width="1"/><path d="M4.5 2.2V6.8M2.2 4.5H6.8" stroke="#111" stroke-width="1.3"/></svg>
<span class="t" style="left:879.0px;top:769.36px;color:#000;font-size:10.5px;letter-spacing:-0.483px;text-shadow:0 1px 0 rgba(255,255,255,.17);">Shader:</span>
<div class="b wm" style="left:969px;top:765.4px;width:182px;height:18px;border-radius:4px"></div>
<span class="t" style="left:976.0px;top:769.36px;color:#fff;font-size:10.5px;letter-spacing:-0.530px;text-shadow:0 1px 0 rgba(0,0,0,.5);">Glossy BSDF</span>
<svg class="b" style="left:1137.6px;top:771.1999999999999px;" width="6" height="6" viewBox="0 0 6 6"><circle cx="3" cy="3" r="2.2" fill="#b0b0b0" stroke="#1e1e1e" stroke-width=".8"/></svg>
<div class="b" style="left:860px;top:790px;width:294px;height:1px;background:#525252"></div>
<div class="b" style="left:860px;top:791px;width:294px;height:1px;background:#7c7c7c"></div>
<svg class="b" style="left:868px;top:797.9px;" width="5" height="7" viewBox="0 0 5 7"><path d="M.6 .4L4 3.5L.6 6.6Z" fill="#1a1a1a"/></svg>
<span class="t" style="left:879.0px;top:795.32px;color:#000;font-size:11.5px;letter-spacing:-0.269px;text-shadow:0 1px 0 rgba(255,255,255,.17);">Volume</span>
<div class="b" style="left:1158px;top:324.5px;width:12px;height:480px;border-radius:6px;border:1px solid #3c3c3c;background:linear-gradient(90deg,#939393,#7a7a7a)"></div>
<div class="b" style="left:1173px;top:27px;width:1px;height:773px;background:#7b7b7b"></div>
<div class="b" style="left:863.3px;top:480px;width:230.4px;height:223.8px;border-radius:0 0 5px 5px;background:rgba(25,25,25,.915);box-shadow:0 2px 6px 1px rgba(0,0,0,.55)"></div>
<div class="b" style="left:867px;top:526.5px;width:224px;height:15.6px;background:linear-gradient(#6f9bde,#5680c2);border:1px solid #3a5f9c;border-width:1px 0"></div>
<svg class="b" style="left:869.0999999999999px;top:492.8px;" width="14.4" height="14.4" viewBox="0 0 14.4 14.4"><defs><radialGradient id="bp0" cx=".4" cy=".34" r=".75"><stop offset="0" stop-color="#d4ccca"/><stop offset=".55" stop-color="#c4bcba"/><stop offset="1" stop-color="#8e8886"/></radialGradient></defs><circle cx="7.2" cy="7.2" r="6.2" fill="url(#bp0)"/></svg>
<span class="t" style="left:893.5px;top:493.76px;color:#fff;font-size:10.5px;letter-spacing:0.228px;text-shadow:0 1px 1px #000;">cloth</span>
<svg class="b" style="left:869.0999999999999px;top:510.2px;" width="14.4" height="14.4" viewBox="0 0 14.4 14.4"><defs><radialGradient id="bp1" cx=".4" cy=".34" r=".75"><stop offset="0" stop-color="#c6c4c8"/><stop offset=".55" stop-color="#b6b4b8"/><stop offset="1" stop-color="#868488"/></radialGradient></defs><circle cx="7.2" cy="7.2" r="6.2" fill="url(#bp1)"/></svg>
<span class="t" style="left:893.5px;top:511.16px;color:#fff;font-size:10.5px;letter-spacing:0.009px;text-shadow:0 1px 1px #000;">cloth thread</span>
<svg class="b" style="left:869.0999999999999px;top:527.5999999999999px;" width="14.4" height="14.4" viewBox="0 0 14.4 14.4"><defs><radialGradient id="bp2" cx=".4" cy=".34" r=".75"><stop offset="0" stop-color="#5e4028"/><stop offset=".55" stop-color="#4a301a"/><stop offset="1" stop-color="#22140a"/></radialGradient></defs><circle cx="7.2" cy="7.2" r="6.2" fill="url(#bp2)"/></svg>
<span class="t" style="left:893.5px;top:528.56px;color:#fff;font-size:10.5px;letter-spacing:-0.038px;text-shadow:0 1px 1px #000;">leather</span>
<svg class="b" style="left:869.0999999999999px;top:545.0px;" width="14.4" height="14.4" viewBox="0 0 14.4 14.4"><defs><radialGradient id="bp3" cx=".4" cy=".34" r=".75"><stop offset="0" stop-color="#7e5a3a"/><stop offset=".55" stop-color="#6a4a2c"/><stop offset="1" stop-color="#3a2614"/></radialGradient></defs><circle cx="7.2" cy="7.2" r="6.2" fill="url(#bp3)"/></svg>
<span class="t" style="left:893.5px;top:545.96px;color:#fff;font-size:10.5px;letter-spacing:-0.132px;text-shadow:0 1px 1px #000;">leather seams</span>
<svg class="b" style="left:869.0999999999999px;top:562.9px;" width="14.4" height="14.4" viewBox="0 0 14.4 14.4"><defs><radialGradient id="bp4" cx=".4" cy=".34" r=".75"><stop offset="0" stop-color="#5a5a62"/><stop offset=".55" stop-color="#34343a"/><stop offset="1" stop-color="#111114"/></radialGradient></defs><circle cx="7.2" cy="7.2" r="6.2" fill="url(#bp4)"/></svg>
<span class="t" style="left:893.5px;top:563.86px;color:#fff;font-size:10.5px;letter-spacing:-0.289px;text-shadow:0 1px 1px #000;">legs</span>
<div class="b" style="left:868.5px;top:680.3px;width:220px;height:16px;border-radius:4px;background:#2b2b2b;border:1px solid #0c0c0c;box-shadow:0 1px 0 rgba(255,255,255,.06)"></div>
<svg class="b" style="left:877.5px;top:681px;" width="15.2" height="15.2" viewBox="0 0 16 16"><path d="M2 14.4L7.4 8.6" stroke="#7a3c0a" stroke-width="2.6" stroke-linecap="round"/><path d="M2 14.4L7.4 8.6" stroke="#f0903a" stroke-width="1.4" stroke-linecap="round"/><circle cx="10" cy="5.8" r="4.3" fill="#55555e" stroke="#d0d0d0" stroke-width="1.1"/><circle cx="10.8" cy="6.6" r="2.2" fill="#c08080" opacity=".7"/><circle cx="8.8" cy="4.6" r="1.6" fill="#fff"/></svg>
<div class="b" style="left:894.3px;top:682px;width:2px;height:13px;background:#2e9bf2"></div>
</div>
</body></html>
